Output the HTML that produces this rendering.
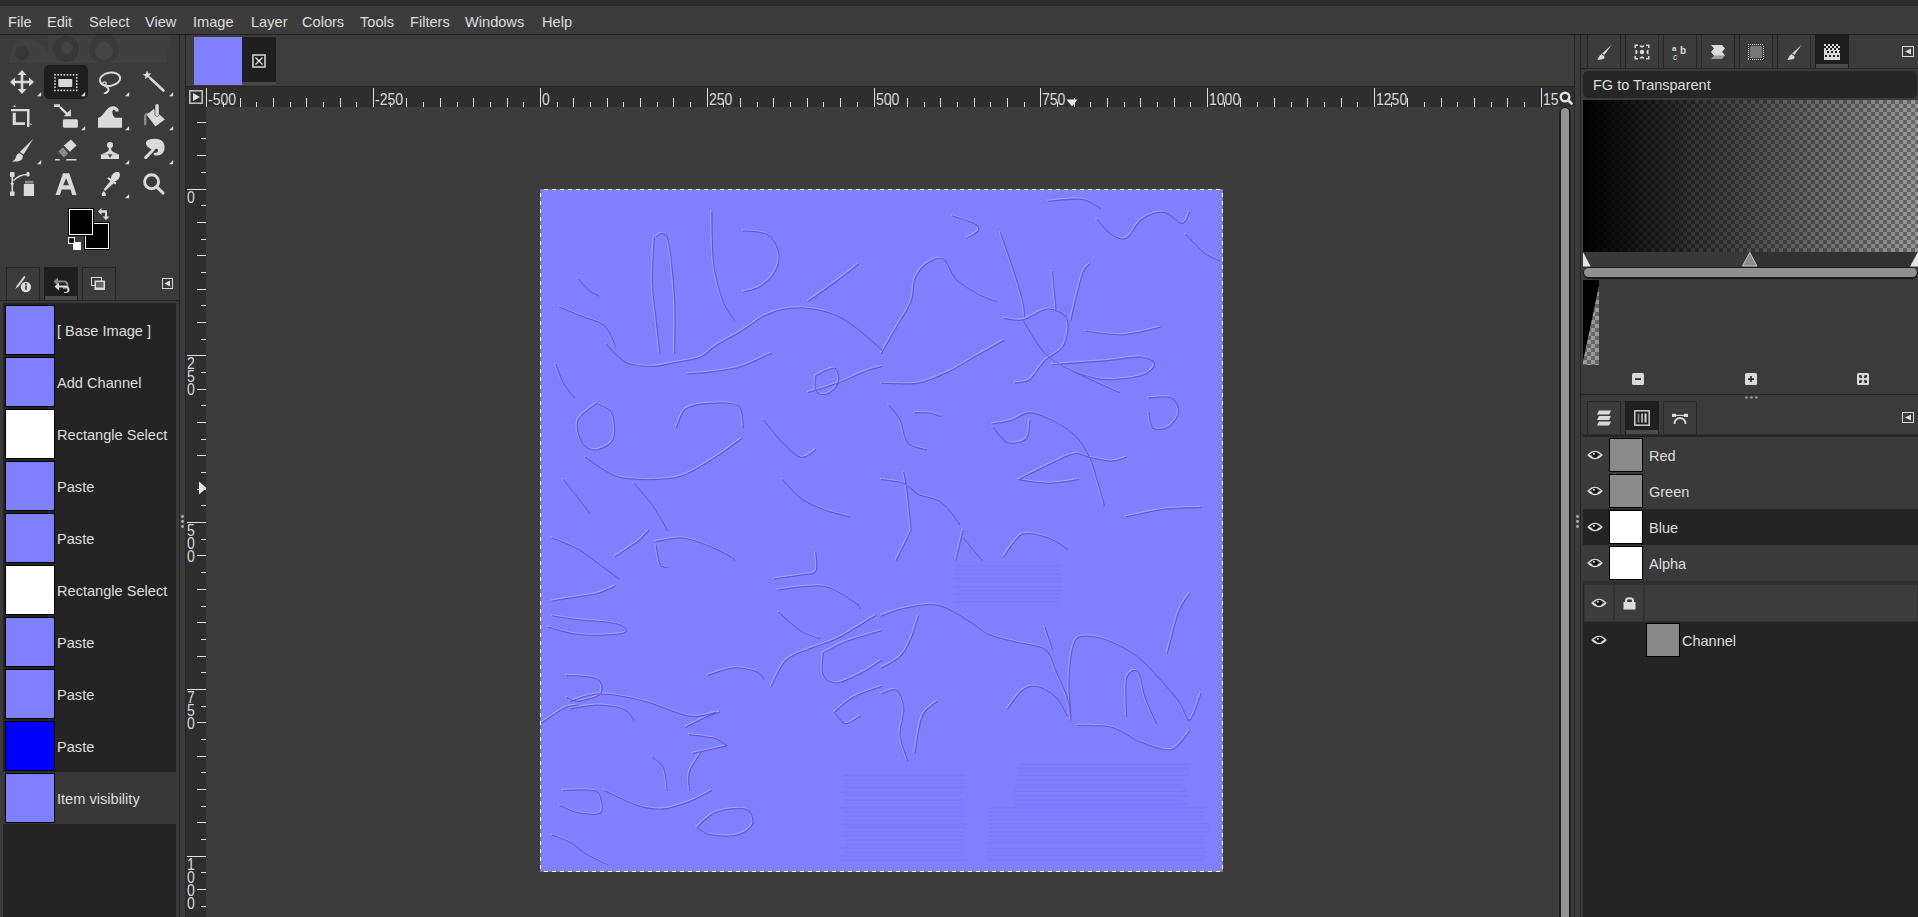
<!DOCTYPE html><html><head><meta charset="utf-8"><style>
*{margin:0;padding:0;box-sizing:border-box}
html,body{width:1918px;height:917px;overflow:hidden;background:#3c3c3c;font-family:"Liberation Sans",sans-serif;color:#dcdcdc}
div,span,svg{position:absolute}
.t{white-space:nowrap;font-size:14.6px;line-height:17px;color:#dedede}
.rl{white-space:nowrap;font-size:14.6px;line-height:14px;color:#d8d8d8;transform:scale(0.96,1.1);transform-origin:0 0}
.th{border:1px solid #000;background:#8080ff}
</style></head><body>
<div style="left:0px;top:0px;width:1918px;height:6px;background:#2b2b2b;"></div>
<div style="left:0px;top:6px;width:1918px;height:28px;background:#3c3c3c;"></div>
<div style="left:0px;top:34px;width:1918px;height:1px;background:#1e1e1e;"></div>
<span class="t" style="left:8px;top:14px;">File</span>
<span class="t" style="left:47px;top:14px;">Edit</span>
<span class="t" style="left:89px;top:14px;">Select</span>
<span class="t" style="left:145px;top:14px;">View</span>
<span class="t" style="left:193px;top:14px;">Image</span>
<span class="t" style="left:251px;top:14px;">Layer</span>
<span class="t" style="left:302px;top:14px;">Colors</span>
<span class="t" style="left:360px;top:14px;">Tools</span>
<span class="t" style="left:410px;top:14px;">Filters</span>
<span class="t" style="left:465px;top:14px;">Windows</span>
<span class="t" style="left:542px;top:14px;">Help</span>
<div style="left:0px;top:35px;width:179px;height:882px;background:#3b3b3b;"></div>
<svg style="left:0px;top:35px" width="179" height="28" viewBox="0 0 179 28"><path d="M9 28 L10 20 Q14 4 26 4 Q38 4 48 16 L48 0 L170 0 L166 28 Z" fill="#404040"/><circle cx="22" cy="18" r="7" fill="#363636"/><circle cx="66" cy="14" r="13" fill="#383838"/><circle cx="67" cy="13" r="6" fill="#424242"/><circle cx="104" cy="14" r="15" fill="#3a3a3a"/><circle cx="104" cy="16" r="9" fill="#444"/></svg>
<div style="left:44px;top:65px;width:44px;height:34px;background:#1e1e1e;border-radius:5px"></div>
<svg style="left:10px;top:70px" width="24" height="24" viewBox="0 0 24 24"><path fill="#dadada" d="M12 0 L16.5 5 L13.3 5 L13.3 10.7 L19 10.7 L19 7.5 L24 12 L19 16.5 L19 13.3 L13.3 13.3 L13.3 19 L16.5 19 L12 24 L7.5 19 L10.7 19 L10.7 13.3 L5 13.3 L5 16.5 L0 12 L5 7.5 L5 10.7 L10.7 10.7 L10.7 5 L7.5 5 Z"/></svg>
<svg style="left:37px;top:92px" width="5" height="5" viewBox="0 0 5 5"><path fill="#dadada" d="M4.2 0 V4.2 H0 Z"/></svg>
<svg style="left:54px;top:70px" width="24" height="24" viewBox="0 0 24 24"><rect x="0.2" y="4" width="1.6" height="1.6" fill="#dadada"/><rect x="0.2" y="19.6" width="1.6" height="1.6" fill="#dadada"/><rect x="3.3" y="4" width="1.6" height="1.6" fill="#dadada"/><rect x="3.3" y="19.6" width="1.6" height="1.6" fill="#dadada"/><rect x="6.4" y="4" width="1.6" height="1.6" fill="#dadada"/><rect x="6.4" y="19.6" width="1.6" height="1.6" fill="#dadada"/><rect x="9.5" y="4" width="1.6" height="1.6" fill="#dadada"/><rect x="9.5" y="19.6" width="1.6" height="1.6" fill="#dadada"/><rect x="12.6" y="4" width="1.6" height="1.6" fill="#dadada"/><rect x="12.6" y="19.6" width="1.6" height="1.6" fill="#dadada"/><rect x="15.7" y="4" width="1.6" height="1.6" fill="#dadada"/><rect x="15.7" y="19.6" width="1.6" height="1.6" fill="#dadada"/><rect x="18.8" y="4" width="1.6" height="1.6" fill="#dadada"/><rect x="18.8" y="19.6" width="1.6" height="1.6" fill="#dadada"/><rect x="21.9" y="4" width="1.6" height="1.6" fill="#dadada"/><rect x="21.9" y="19.6" width="1.6" height="1.6" fill="#dadada"/><rect x="0.2" y="7.1" width="1.6" height="1.6" fill="#dadada"/><rect x="21.9" y="7.1" width="1.6" height="1.6" fill="#dadada"/><rect x="0.2" y="10.2" width="1.6" height="1.6" fill="#dadada"/><rect x="21.9" y="10.2" width="1.6" height="1.6" fill="#dadada"/><rect x="0.2" y="13.3" width="1.6" height="1.6" fill="#dadada"/><rect x="21.9" y="13.3" width="1.6" height="1.6" fill="#dadada"/><rect x="0.2" y="16.4" width="1.6" height="1.6" fill="#dadada"/><rect x="21.9" y="16.4" width="1.6" height="1.6" fill="#dadada"/><rect x="4.3" y="8.9" width="14" height="8" rx="0.8" fill="#dadada"/></svg>
<svg style="left:81px;top:92px" width="5" height="5" viewBox="0 0 5 5"><path fill="#dadada" d="M4.2 0 V4.2 H0 Z"/></svg>
<svg style="left:98px;top:70px" width="24" height="24" viewBox="0 0 24 24"><ellipse cx="12" cy="9.2" rx="10.2" ry="6.6" fill="none" stroke="#dadada" stroke-width="1.9" transform="rotate(-10 12 9.2)"/><circle cx="6.5" cy="13.6" r="1.7" fill="none" stroke="#dadada" stroke-width="1.3"/><path d="M6 15 C7 16 9 16.5 10 18 C11.3 20 10 22.5 6.8 23.4" fill="none" stroke="#dadada" stroke-width="2" stroke-linecap="round"/></svg>
<svg style="left:125px;top:92px" width="5" height="5" viewBox="0 0 5 5"><path fill="#dadada" d="M4.2 0 V4.2 H0 Z"/></svg>
<svg style="left:142px;top:70px" width="24" height="24" viewBox="0 0 24 24"><path fill="#dadada" d="M5 0.5 L6.3 3.4 L9.4 3.2 L7.3 5.6 L8.4 8.5 L5.5 7.3 L3.1 9.3 L3.4 6.2 L0.7 4.5 L3.8 3.8 Z"/><path d="M8.5 8.5 L21.5 20.5" stroke="#dadada" stroke-width="2.6" stroke-linecap="round"/></svg>
<svg style="left:169px;top:92px" width="5" height="5" viewBox="0 0 5 5"><path fill="#dadada" d="M4.2 0 V4.2 H0 Z"/></svg>
<svg style="left:10px;top:104px" width="24" height="24" viewBox="0 0 24 24"><path fill="#dadada" d="M1 5 H19.5 V23 H17 V7.2 H1 Z M2.7 8.7 H5.8 V18.2 H15 V21 H2.7 Z M3.6 1.6 H5.5 V3 H3.6 Z M20.5 19.5 h1.2 v1.5 h-1.2z"/></svg>
<svg style="left:54px;top:104px" width="24" height="24" viewBox="0 0 24 24"><rect x="0" y="0.3" width="6" height="2.8" rx="0.5" fill="#dadada"/><path d="M6 3 L13.5 10.5" stroke="#dadada" stroke-width="2.4"/><path fill="#dadada" d="M9.8 12.2 H16.9 V5.2 Z"/><rect x="8.9" y="15.2" width="15" height="8.5" rx="1.5" fill="#dadada"/></svg>
<svg style="left:81px;top:126px" width="5" height="5" viewBox="0 0 5 5"><path fill="#dadada" d="M4.2 0 V4.2 H0 Z"/></svg>
<svg style="left:98px;top:104px" width="24" height="24" viewBox="0 0 24 24"><path fill="#dadada" d="M0 23.7 V13.8 C5 13.8 8 2.2 15 2.2 C18.5 2.2 20.8 4.5 20.8 7.6 L17.6 7.6 C17.6 6.2 16.6 5.5 15.6 5.8 C13.6 6.4 14 11 17 13.8 L24 13.8 V23.7 Z"/></svg>
<svg style="left:125px;top:126px" width="5" height="5" viewBox="0 0 5 5"><path fill="#dadada" d="M4.2 0 V4.2 H0 Z"/></svg>
<svg style="left:142px;top:104px" width="24" height="24" viewBox="0 0 24 24"><path d="M3.2 20 V12.5 C3.2 11 4 10.2 5.5 9.8" fill="none" stroke="#8a8a8a" stroke-width="2.4" stroke-linecap="round"/><path fill="#dadada" d="M4.7 10.7 L11.7 4.9 L22.9 15.5 L13.4 22.5 Z"/><rect x="12.6" y="-0.3" width="4.8" height="13" rx="2.4" fill="#3b3b3b"/><rect x="13.3" y="0" width="3.5" height="12.2" rx="1.75" fill="#dadada"/></svg>
<svg style="left:169px;top:126px" width="5" height="5" viewBox="0 0 5 5"><path fill="#dadada" d="M4.2 0 V4.2 H0 Z"/></svg>
<svg style="left:10px;top:138px" width="24" height="24" viewBox="0 0 24 24"><path fill="#dadada" d="M23.3 0.8 L13.5 16.4 L9.8 14 Z"/><path fill="#dadada" d="M9.2 15 C7.2 15.8 6.1 17.8 5.6 19.8 C5.2 21.4 3.8 22.7 1.8 23.4 C5 23.7 9 23.7 11.1 22.1 C12.6 21 13.1 19 12.8 17.4 Z"/></svg>
<svg style="left:37px;top:160px" width="5" height="5" viewBox="0 0 5 5"><path fill="#dadada" d="M4.2 0 V4.2 H0 Z"/></svg>
<svg style="left:54px;top:138px" width="24" height="24" viewBox="0 0 24 24"><path fill="#dadada" d="M17 1.5 L22.6 7.5 L15.8 13.8 L9.8 7.6 Z"/><path fill="#8a8a8a" d="M9 9.3 L14.2 15.6 L9.8 19.4 L4.3 13.4 Z"/><rect x="1.1" y="20.9" width="4.8" height="1.7" rx="0.5" fill="#dadada"/><rect x="12.2" y="20.9" width="10.3" height="1.7" rx="0.5" fill="#dadada"/></svg>
<svg style="left:98px;top:138px" width="24" height="24" viewBox="0 0 24 24"><circle cx="12" cy="7.1" r="3.05" fill="#dadada"/><path fill="#dadada" d="M10.8 9 H13.2 V11 C13.2 13.6 16 14.6 21 16.3 H3 C8 14.6 10.8 13.6 10.8 11 Z"/><path fill="#dadada" d="M2.9 16.2 H9.9 L12.05 20 L14.2 16.2 H21 V21.1 H2.9 Z"/></svg>
<svg style="left:125px;top:160px" width="5" height="5" viewBox="0 0 5 5"><path fill="#dadada" d="M4.2 0 V4.2 H0 Z"/></svg>
<svg style="left:142px;top:138px" width="24" height="24" viewBox="0 0 24 24"><path fill="#dadada" d="M4 4 C6 0.5 13 0 17.5 1.5 C22 3 23.5 8 22 13 C20.5 17 15 18.5 12 17 L11.5 15 C14 15.5 16.5 14 16 12 C15.5 10 13 10.5 12 13 L5 20.5 C4 21.5 2.5 21 2.2 20 C2 19 2.5 18.5 3 18 L9.5 11.5 C6 9 3.5 8 4 4 Z"/></svg>
<svg style="left:169px;top:160px" width="5" height="5" viewBox="0 0 5 5"><path fill="#dadada" d="M4.2 0 V4.2 H0 Z"/></svg>
<svg style="left:10px;top:172px" width="24" height="24" viewBox="0 0 24 24"><rect x="0" y="0" width="4.5" height="5" rx="0.8" fill="#dadada"/><rect x="0" y="19.5" width="4.5" height="4.5" rx="0.8" fill="#dadada"/><rect x="1.5" y="4" width="1.6" height="16" fill="#dadada"/><path d="M2.2 9.5 L4 11.8 L2.2 14 L0.4 11.8 Z" fill="#dadada"/><path d="M3.5 8.5 C8 4 12 2.5 17.5 2.5" fill="none" stroke="#dadada" stroke-width="1.5"/><rect x="16.5" y="0" width="3" height="4.5" rx="1" fill="#dadada"/><rect x="15" y="8.8" width="8.4" height="2.8" fill="#8a8a8a"/><path fill="#dadada" d="M14 12 H24 C24.4 12 24.4 13 24.4 14 V24 H13.8 V14 C13.8 13 13.8 12 14 12Z"/></svg>
<svg style="left:54px;top:172px" width="24" height="24" viewBox="0 0 24 24"><path fill="#dadada" fill-rule="evenodd" d="M9 1.3 H15.2 L22.6 23 H18.2 L16.6 17.6 H7.6 L6 23 H1.6 Z M9.1 13.2 H15 L12.05 6.2 Z"/></svg>
<svg style="left:98px;top:172px" width="24" height="24" viewBox="0 0 24 24"><ellipse cx="17.5" cy="4.6" rx="5.5" ry="3.7" transform="rotate(-52 17.5 4.6)" fill="#dadada"/><path d="M10.6 6.4 L17.2 11.1" stroke="#dadada" stroke-width="2.2" stroke-linecap="round"/><path d="M13.6 7.6 L16.6 10.5 L7 18.9 L5.6 17.6 Z" fill="#dadada"/><path d="M5.8 19.3 C4.6 20.5 3.7 21.4 3.7 22.3 A2.1 2.1 0 0 0 7.9 22.3 C7.9 21.4 7 20.5 5.8 19.3Z" fill="#dadada"/></svg>
<svg style="left:125px;top:194px" width="5" height="5" viewBox="0 0 5 5"><path fill="#dadada" d="M4.2 0 V4.2 H0 Z"/></svg>
<svg style="left:142px;top:172px" width="24" height="24" viewBox="0 0 24 24"><circle cx="9.6" cy="9.7" r="7" fill="none" stroke="#dadada" stroke-width="2.9"/><path d="M15.2 15.3 L21 21" stroke="#dadada" stroke-width="3.1" stroke-linecap="round"/></svg>
<div style="left:84px;top:222px;width:26px;height:28px;background:#000;"></div>
<div style="left:85px;top:223px;width:24px;height:26px;background:#fff;"></div>
<div style="left:86px;top:224px;width:22px;height:24px;background:#000;"></div>
<div style="left:68px;top:208px;width:26px;height:28px;background:#000;"></div>
<div style="left:69px;top:209px;width:24px;height:26px;background:#fff;"></div>
<div style="left:70px;top:210px;width:22px;height:24px;background:#000;"></div>
<svg style="left:98px;top:208px" width="12" height="12" viewBox="0 0 12 12"><path fill="#dadada" d="M0 3.5 L3.5 0 V2.3 H9 V8.5 H11.5 L8 12 L4.5 8.5 H7 V4.7 H3.5 V7 Z"/></svg>
<svg style="left:68px;top:237px" width="13" height="13" viewBox="0 0 13 13"><rect x="5" y="5" width="8" height="8" fill="#fff"/><rect x="0" y="0" width="7" height="7" fill="#eee"/><rect x="1.2" y="1.2" width="4.6" height="4.6" fill="#000"/></svg>
<div style="left:6px;top:267px;width:34px;height:33px;background:#3c3c3c;border:1px solid #282828;border-bottom:none"></div>
<div style="left:44px;top:267px;width:34px;height:33px;background:#1f1f1f;"></div>
<div style="left:45px;top:296px;width:32px;height:4px;background:#4a4a4a;"></div>
<div style="left:82px;top:267px;width:34px;height:33px;background:#3c3c3c;border:1px solid #282828;border-bottom:none"></div>
<svg style="left:14px;top:275px" width="18" height="18" viewBox="0 0 18 18"><path d="M10.2 0.8 L11.6 1.9 L4.3 11.7 L1.3 13.9 L2.9 10.6 Z" fill="#dadada"/><circle cx="11.9" cy="12" r="5.2" fill="#dadada"/><rect x="11.1" y="10.6" width="1.7" height="4.2" fill="#3c3c3c"/><circle cx="11.95" cy="8.9" r="1" fill="#3c3c3c"/></svg>
<svg style="left:52px;top:275px" width="18" height="18" viewBox="0 0 18 18"><path d="M12 5.5 H6 V2.5 L1.5 6.5 L6 10.5 V7.5 H12 C13.5 7.5 14.5 8.5 14.5 10 C14.5 11.5 13.5 12 12 12 H11 V14 H12 C15 14 16.5 12.5 16.5 10 C16.5 7 14.5 5.5 12 5.5Z" fill="#888"/><path d="M5 10.5 H11 V7.5 L15.5 11.5 L11 15.5 V12.5 H5 C3.5 12.5 2.5 13.5 2.5 15 C2.5 16.5 3.5 17 5 17 H6 V18 H5 C2 18 0.5 17 0.5 15 C0.5 12 2.5 10.5 5 10.5Z" fill="#dadada" transform="translate(18,0) scale(-1,1)"/></svg>
<svg style="left:91px;top:277px" width="16" height="16" viewBox="0 0 16 16"><rect x="0.5" y="0.5" width="10" height="8" fill="none" stroke="#dadada" stroke-width="1"/><rect x="3.5" y="3.5" width="10.5" height="9.5" fill="#dadada"/><rect x="5" y="5" width="7.5" height="5.5" fill="#666"/></svg>
<svg style="left:162px;top:278px" width="11" height="11" viewBox="0 0 11 11"><rect x="0.5" y="0.5" width="10" height="10" fill="none" stroke="#dadada" stroke-width="1"/><path d="M8 2.5 V8.5 L2.5 5.5 Z" fill="#dadada"/></svg>
<div style="left:0px;top:300px;width:179px;height:1px;background:#262626;"></div>
<div style="left:0px;top:301px;width:179px;height:2px;background:#393939;"></div>
<div style="left:3px;top:303px;width:173px;height:614px;background:#242424;"></div>
<div style="left:5px;top:305px;width:50px;height:50px;background:#8080ff;border:1px solid #000"></div>
<span class="t" style="left:57px;top:323px;">[ Base Image ]</span>
<div style="left:5px;top:357px;width:50px;height:50px;background:#8080ff;border:1px solid #000"></div>
<span class="t" style="left:57px;top:375px;">Add Channel</span>
<div style="left:5px;top:409px;width:50px;height:50px;background:#fff;border:1px solid #000"></div>
<span class="t" style="left:57px;top:427px;">Rectangle Select</span>
<div style="left:5px;top:461px;width:50px;height:50px;background:#8080ff;border:1px solid #000"></div>
<span class="t" style="left:57px;top:479px;">Paste</span>
<div style="left:5px;top:513px;width:50px;height:50px;background:#8080ff;border:1px solid #000"></div>
<span class="t" style="left:57px;top:531px;">Paste</span>
<div style="left:5px;top:565px;width:50px;height:50px;background:#fff;border:1px solid #000"></div>
<span class="t" style="left:57px;top:583px;">Rectangle Select</span>
<div style="left:5px;top:617px;width:50px;height:50px;background:#8080ff;border:1px solid #000"></div>
<span class="t" style="left:57px;top:635px;">Paste</span>
<div style="left:5px;top:669px;width:50px;height:50px;background:#8080ff;border:1px solid #000"></div>
<span class="t" style="left:57px;top:687px;">Paste</span>
<div style="left:5px;top:721px;width:50px;height:50px;background:#0000ff;border:1px solid #000"></div>
<span class="t" style="left:57px;top:739px;">Paste</span>
<div style="left:3px;top:772px;width:173px;height:52px;background:#383838;"></div>
<div style="left:5px;top:773px;width:50px;height:50px;background:#8080ff;border:1px solid #000"></div>
<span class="t" style="left:57px;top:791px;">Item visibility</span>
<div style="left:179px;top:35px;width:7px;height:882px;background:#3b3b3b;"></div>
<div style="left:179px;top:35px;width:1px;height:882px;background:#262626;"></div>
<div style="left:185px;top:35px;width:1px;height:882px;background:#262626;"></div>
<div style="left:186px;top:35px;width:1388px;height:51px;background:#3d3d3d;"></div>
<div style="left:186px;top:86px;width:1388px;height:1px;background:#262626;"></div>
<div style="left:194px;top:37px;width:82px;height:48px;background:#1f1f1f;"></div>
<div style="left:194px;top:37px;width:48px;height:48px;background:#8080ff;"></div>
<div style="left:242px;top:82px;width:34px;height:3px;background:#4a4a4a;"></div>
<svg style="left:252px;top:54px" width="14" height="14" viewBox="0 0 14 14"><rect x="1" y="1" width="12" height="12" fill="none" stroke="#cfcfcf" stroke-width="1.6"/><path d="M3.5 3.5 L10.5 10.5 M10.5 3.5 L3.5 10.5" stroke="#e8e8e8" stroke-width="1.3"/></svg>
<div style="left:186px;top:87px;width:1388px;height:20px;background:#2e2e2e;"></div>
<div style="left:186px;top:107px;width:20px;height:810px;background:#2e2e2e;"></div>
<svg style="left:189px;top:90px" width="14" height="14" viewBox="0 0 14 14"><rect x="0.8" y="0.8" width="12.4" height="12.4" fill="none" stroke="#bdbdbd" stroke-width="1.6"/><path d="M4 3 V11 L11 7 Z" fill="#e0e0e0"/></svg>
<div style="left:206px;top:88px;width:1px;height:19px;background:#e0e0e0;"></div>
<span class="rl" style="left:208px;top:92px;">-500</span>
<div style="left:223px;top:102px;width:1px;height:5px;background:#e0e0e0;"></div>
<div style="left:240px;top:98px;width:1px;height:9px;background:#e0e0e0;"></div>
<div style="left:256px;top:102px;width:1px;height:5px;background:#e0e0e0;"></div>
<div style="left:273px;top:98px;width:1px;height:9px;background:#e0e0e0;"></div>
<div style="left:290px;top:102px;width:1px;height:5px;background:#e0e0e0;"></div>
<div style="left:306px;top:98px;width:1px;height:9px;background:#e0e0e0;"></div>
<div style="left:323px;top:102px;width:1px;height:5px;background:#e0e0e0;"></div>
<div style="left:340px;top:98px;width:1px;height:9px;background:#e0e0e0;"></div>
<div style="left:356px;top:102px;width:1px;height:5px;background:#e0e0e0;"></div>
<div style="left:373px;top:88px;width:1px;height:19px;background:#e0e0e0;"></div>
<span class="rl" style="left:375px;top:92px;">-250</span>
<div style="left:390px;top:102px;width:1px;height:5px;background:#e0e0e0;"></div>
<div style="left:406px;top:98px;width:1px;height:9px;background:#e0e0e0;"></div>
<div style="left:423px;top:102px;width:1px;height:5px;background:#e0e0e0;"></div>
<div style="left:440px;top:98px;width:1px;height:9px;background:#e0e0e0;"></div>
<div style="left:457px;top:102px;width:1px;height:5px;background:#e0e0e0;"></div>
<div style="left:473px;top:98px;width:1px;height:9px;background:#e0e0e0;"></div>
<div style="left:490px;top:102px;width:1px;height:5px;background:#e0e0e0;"></div>
<div style="left:507px;top:98px;width:1px;height:9px;background:#e0e0e0;"></div>
<div style="left:523px;top:102px;width:1px;height:5px;background:#e0e0e0;"></div>
<div style="left:540px;top:88px;width:1px;height:19px;background:#e0e0e0;"></div>
<span class="rl" style="left:542px;top:92px;">0</span>
<div style="left:557px;top:102px;width:1px;height:5px;background:#e0e0e0;"></div>
<div style="left:573px;top:98px;width:1px;height:9px;background:#e0e0e0;"></div>
<div style="left:590px;top:102px;width:1px;height:5px;background:#e0e0e0;"></div>
<div style="left:607px;top:98px;width:1px;height:9px;background:#e0e0e0;"></div>
<div style="left:623px;top:102px;width:1px;height:5px;background:#e0e0e0;"></div>
<div style="left:640px;top:98px;width:1px;height:9px;background:#e0e0e0;"></div>
<div style="left:657px;top:102px;width:1px;height:5px;background:#e0e0e0;"></div>
<div style="left:673px;top:98px;width:1px;height:9px;background:#e0e0e0;"></div>
<div style="left:690px;top:102px;width:1px;height:5px;background:#e0e0e0;"></div>
<div style="left:707px;top:88px;width:1px;height:19px;background:#e0e0e0;"></div>
<span class="rl" style="left:709px;top:92px;">250</span>
<div style="left:723px;top:102px;width:1px;height:5px;background:#e0e0e0;"></div>
<div style="left:740px;top:98px;width:1px;height:9px;background:#e0e0e0;"></div>
<div style="left:757px;top:102px;width:1px;height:5px;background:#e0e0e0;"></div>
<div style="left:773px;top:98px;width:1px;height:9px;background:#e0e0e0;"></div>
<div style="left:790px;top:102px;width:1px;height:5px;background:#e0e0e0;"></div>
<div style="left:807px;top:98px;width:1px;height:9px;background:#e0e0e0;"></div>
<div style="left:823px;top:102px;width:1px;height:5px;background:#e0e0e0;"></div>
<div style="left:840px;top:98px;width:1px;height:9px;background:#e0e0e0;"></div>
<div style="left:857px;top:102px;width:1px;height:5px;background:#e0e0e0;"></div>
<div style="left:874px;top:88px;width:1px;height:19px;background:#e0e0e0;"></div>
<span class="rl" style="left:876px;top:92px;">500</span>
<div style="left:890px;top:102px;width:1px;height:5px;background:#e0e0e0;"></div>
<div style="left:907px;top:98px;width:1px;height:9px;background:#e0e0e0;"></div>
<div style="left:924px;top:102px;width:1px;height:5px;background:#e0e0e0;"></div>
<div style="left:940px;top:98px;width:1px;height:9px;background:#e0e0e0;"></div>
<div style="left:957px;top:102px;width:1px;height:5px;background:#e0e0e0;"></div>
<div style="left:974px;top:98px;width:1px;height:9px;background:#e0e0e0;"></div>
<div style="left:990px;top:102px;width:1px;height:5px;background:#e0e0e0;"></div>
<div style="left:1007px;top:98px;width:1px;height:9px;background:#e0e0e0;"></div>
<div style="left:1024px;top:102px;width:1px;height:5px;background:#e0e0e0;"></div>
<div style="left:1040px;top:88px;width:1px;height:19px;background:#e0e0e0;"></div>
<span class="rl" style="left:1042px;top:92px;">750</span>
<div style="left:1057px;top:102px;width:1px;height:5px;background:#e0e0e0;"></div>
<div style="left:1074px;top:98px;width:1px;height:9px;background:#e0e0e0;"></div>
<div style="left:1090px;top:102px;width:1px;height:5px;background:#e0e0e0;"></div>
<div style="left:1107px;top:98px;width:1px;height:9px;background:#e0e0e0;"></div>
<div style="left:1124px;top:102px;width:1px;height:5px;background:#e0e0e0;"></div>
<div style="left:1140px;top:98px;width:1px;height:9px;background:#e0e0e0;"></div>
<div style="left:1157px;top:102px;width:1px;height:5px;background:#e0e0e0;"></div>
<div style="left:1174px;top:98px;width:1px;height:9px;background:#e0e0e0;"></div>
<div style="left:1190px;top:102px;width:1px;height:5px;background:#e0e0e0;"></div>
<div style="left:1207px;top:88px;width:1px;height:19px;background:#e0e0e0;"></div>
<span class="rl" style="left:1209px;top:92px;">1000</span>
<div style="left:1224px;top:102px;width:1px;height:5px;background:#e0e0e0;"></div>
<div style="left:1240px;top:98px;width:1px;height:9px;background:#e0e0e0;"></div>
<div style="left:1257px;top:102px;width:1px;height:5px;background:#e0e0e0;"></div>
<div style="left:1274px;top:98px;width:1px;height:9px;background:#e0e0e0;"></div>
<div style="left:1291px;top:102px;width:1px;height:5px;background:#e0e0e0;"></div>
<div style="left:1307px;top:98px;width:1px;height:9px;background:#e0e0e0;"></div>
<div style="left:1324px;top:102px;width:1px;height:5px;background:#e0e0e0;"></div>
<div style="left:1341px;top:98px;width:1px;height:9px;background:#e0e0e0;"></div>
<div style="left:1357px;top:102px;width:1px;height:5px;background:#e0e0e0;"></div>
<div style="left:1374px;top:88px;width:1px;height:19px;background:#e0e0e0;"></div>
<span class="rl" style="left:1376px;top:92px;">1250</span>
<div style="left:1391px;top:102px;width:1px;height:5px;background:#e0e0e0;"></div>
<div style="left:1407px;top:98px;width:1px;height:9px;background:#e0e0e0;"></div>
<div style="left:1424px;top:102px;width:1px;height:5px;background:#e0e0e0;"></div>
<div style="left:1441px;top:98px;width:1px;height:9px;background:#e0e0e0;"></div>
<div style="left:1457px;top:102px;width:1px;height:5px;background:#e0e0e0;"></div>
<div style="left:1474px;top:98px;width:1px;height:9px;background:#e0e0e0;"></div>
<div style="left:1491px;top:102px;width:1px;height:5px;background:#e0e0e0;"></div>
<div style="left:1507px;top:98px;width:1px;height:9px;background:#e0e0e0;"></div>
<div style="left:1524px;top:102px;width:1px;height:5px;background:#e0e0e0;"></div>
<div style="left:1541px;top:88px;width:1px;height:19px;background:#e0e0e0;"></div>
<span class="rl" style="left:1543px;top:92px;">15</span>
<div style="left:197px;top:122px;width:9px;height:1px;background:#e0e0e0;"></div>
<div style="left:201px;top:138px;width:5px;height:1px;background:#e0e0e0;"></div>
<div style="left:197px;top:155px;width:9px;height:1px;background:#e0e0e0;"></div>
<div style="left:201px;top:172px;width:5px;height:1px;background:#e0e0e0;"></div>
<div style="left:187px;top:189px;width:19px;height:1px;background:#e0e0e0;"></div>
<span class="rl" style="left:187px;top:189.5px;">0</span>
<div style="left:201px;top:205px;width:5px;height:1px;background:#e0e0e0;"></div>
<div style="left:197px;top:222px;width:9px;height:1px;background:#e0e0e0;"></div>
<div style="left:201px;top:239px;width:5px;height:1px;background:#e0e0e0;"></div>
<div style="left:197px;top:255px;width:9px;height:1px;background:#e0e0e0;"></div>
<div style="left:201px;top:272px;width:5px;height:1px;background:#e0e0e0;"></div>
<div style="left:197px;top:289px;width:9px;height:1px;background:#e0e0e0;"></div>
<div style="left:201px;top:305px;width:5px;height:1px;background:#e0e0e0;"></div>
<div style="left:197px;top:322px;width:9px;height:1px;background:#e0e0e0;"></div>
<div style="left:201px;top:339px;width:5px;height:1px;background:#e0e0e0;"></div>
<div style="left:187px;top:355px;width:19px;height:1px;background:#e0e0e0;"></div>
<span class="rl" style="left:187px;top:355.5px;">2</span>
<span class="rl" style="left:187px;top:368.8px;">5</span>
<span class="rl" style="left:187px;top:382.1px;">0</span>
<div style="left:201px;top:372px;width:5px;height:1px;background:#e0e0e0;"></div>
<div style="left:197px;top:389px;width:9px;height:1px;background:#e0e0e0;"></div>
<div style="left:201px;top:405px;width:5px;height:1px;background:#e0e0e0;"></div>
<div style="left:197px;top:422px;width:9px;height:1px;background:#e0e0e0;"></div>
<div style="left:201px;top:439px;width:5px;height:1px;background:#e0e0e0;"></div>
<div style="left:197px;top:455px;width:9px;height:1px;background:#e0e0e0;"></div>
<div style="left:201px;top:472px;width:5px;height:1px;background:#e0e0e0;"></div>
<div style="left:197px;top:489px;width:9px;height:1px;background:#e0e0e0;"></div>
<div style="left:201px;top:505px;width:5px;height:1px;background:#e0e0e0;"></div>
<div style="left:187px;top:522px;width:19px;height:1px;background:#e0e0e0;"></div>
<span class="rl" style="left:187px;top:522.5px;">5</span>
<span class="rl" style="left:187px;top:535.8px;">0</span>
<span class="rl" style="left:187px;top:549.1px;">0</span>
<div style="left:201px;top:539px;width:5px;height:1px;background:#e0e0e0;"></div>
<div style="left:197px;top:555px;width:9px;height:1px;background:#e0e0e0;"></div>
<div style="left:201px;top:572px;width:5px;height:1px;background:#e0e0e0;"></div>
<div style="left:197px;top:589px;width:9px;height:1px;background:#e0e0e0;"></div>
<div style="left:201px;top:606px;width:5px;height:1px;background:#e0e0e0;"></div>
<div style="left:197px;top:622px;width:9px;height:1px;background:#e0e0e0;"></div>
<div style="left:201px;top:639px;width:5px;height:1px;background:#e0e0e0;"></div>
<div style="left:197px;top:656px;width:9px;height:1px;background:#e0e0e0;"></div>
<div style="left:201px;top:672px;width:5px;height:1px;background:#e0e0e0;"></div>
<div style="left:187px;top:689px;width:19px;height:1px;background:#e0e0e0;"></div>
<span class="rl" style="left:187px;top:689.5px;">7</span>
<span class="rl" style="left:187px;top:702.8px;">5</span>
<span class="rl" style="left:187px;top:716.1px;">0</span>
<div style="left:201px;top:706px;width:5px;height:1px;background:#e0e0e0;"></div>
<div style="left:197px;top:722px;width:9px;height:1px;background:#e0e0e0;"></div>
<div style="left:201px;top:739px;width:5px;height:1px;background:#e0e0e0;"></div>
<div style="left:197px;top:756px;width:9px;height:1px;background:#e0e0e0;"></div>
<div style="left:201px;top:772px;width:5px;height:1px;background:#e0e0e0;"></div>
<div style="left:197px;top:789px;width:9px;height:1px;background:#e0e0e0;"></div>
<div style="left:201px;top:806px;width:5px;height:1px;background:#e0e0e0;"></div>
<div style="left:197px;top:822px;width:9px;height:1px;background:#e0e0e0;"></div>
<div style="left:201px;top:839px;width:5px;height:1px;background:#e0e0e0;"></div>
<div style="left:187px;top:856px;width:19px;height:1px;background:#e0e0e0;"></div>
<span class="rl" style="left:187px;top:856.5px;">1</span>
<span class="rl" style="left:187px;top:869.8px;">0</span>
<span class="rl" style="left:187px;top:883.1px;">0</span>
<span class="rl" style="left:187px;top:896.4px;">0</span>
<div style="left:201px;top:872px;width:5px;height:1px;background:#e0e0e0;"></div>
<div style="left:197px;top:889px;width:9px;height:1px;background:#e0e0e0;"></div>
<div style="left:201px;top:906px;width:5px;height:1px;background:#e0e0e0;"></div>
<svg style="left:1559px;top:91px" width="14" height="14" viewBox="0 0 14 14"><circle cx="6" cy="6" r="4.3" fill="none" stroke="#e0e0e0" stroke-width="2.4"/><path d="M9 9 L12.5 12.5" stroke="#e0e0e0" stroke-width="2.6" stroke-linecap="round"/></svg>
<div style="left:1559px;top:107px;width:12px;height:810px;background:#1e1e1e;border-radius:6px 6px 0 0"></div>
<div style="left:1561px;top:108px;width:8px;height:809px;background:#939393;border-radius:4px 4px 0 0"></div>
<div style="left:540px;top:189px;width:683px;height:683px;background:#8080ff;"></div>
<svg style="left:541px;top:190px" width="681" height="681" viewBox="0 0 682 682"><g fill="none" stroke-linejoin="round" stroke-linecap="round"><path d="M65.1 154.3 C68.5 157.4 77.8 169.2 85.5 172.9 C93.3 176.6 103.5 176.6 111.6 176.6 C119.6 176.6 125.8 174.5 133.9 172.9 C141.9 171.4 153.1 170.1 159.9 167.3 C166.7 164.6 168.0 160.5 174.8 156.2 C181.6 151.8 192.7 146.3 200.8 141.3 C208.9 136.4 215.7 130.2 223.1 126.4 C230.6 122.7 237.4 120.2 245.4 119.0 C253.5 117.8 262.8 117.8 271.5 119.0 C280.1 120.2 289.4 122.7 297.5 126.4 C305.5 130.2 312.6 135.7 319.8 141.3 C327.1 146.9 337.5 156.8 341.0 159.9 M146.9 184.1 C150.9 183.8 162.1 183.5 171.1 182.2 C180.0 181.0 190.9 179.7 200.8 176.6 C210.7 173.5 225.6 165.8 230.6 163.6 M115.3 46.5 C116.5 46.0 120.5 42.3 122.7 43.9 C124.9 45.4 126.4 44.5 128.3 55.8 C130.2 67.1 132.9 93.6 133.9 111.6 C134.8 129.5 133.9 154.9 133.9 163.6 M113.4 48.3 C113.1 55.8 111.2 79.3 111.6 93.0 C111.9 106.6 114.0 118.4 115.3 130.2 C116.5 141.9 118.4 158.0 119.0 163.6 M171.1 22.3 C171.4 31.0 171.1 59.5 172.9 74.4 C174.8 89.2 178.8 102.3 182.2 111.6 C185.6 120.9 191.5 127.1 193.4 130.2 M202.7 40.9 C206.7 41.5 220.9 40.9 226.8 44.6 C232.7 48.3 236.8 57.0 238.0 63.2 C239.2 69.4 237.4 76.2 234.3 81.8 C231.2 87.4 224.7 93.3 219.4 96.7 C214.1 100.1 205.5 101.3 202.7 102.3 M267.7 111.6 C272.1 108.5 285.4 99.2 293.8 93.0 C302.1 86.8 313.9 77.5 317.9 74.4 M18.6 117.1 C22.3 118.7 33.5 123.3 40.9 126.4 C48.3 129.5 57.6 130.8 63.2 135.7 C68.8 140.7 72.5 152.8 74.4 156.2 M37.2 89.2 C39.0 91.1 44.9 97.6 48.3 100.4 C51.8 103.2 56.1 105.1 57.6 106.0 M55.8 213.8 C58.3 215.4 67.9 217.2 70.7 223.1 C73.4 229.0 75.0 243.0 72.5 249.1 C70.0 255.3 61.0 259.7 55.8 260.3 C50.5 260.9 44.0 257.8 40.9 252.9 C37.8 247.9 34.7 237.1 37.2 230.6 C39.7 224.0 52.7 216.6 55.8 213.8 M135.7 238.0 C137.3 234.9 139.8 223.4 145.0 219.4 C150.3 215.4 158.7 214.4 167.3 213.8 C176.0 213.2 191.2 211.7 197.1 215.7 C203.0 219.7 201.7 234.3 202.7 238.0 M44.6 267.7 C49.6 270.8 63.8 282.6 74.4 286.3 C84.9 290.1 96.7 290.1 107.8 290.1 C119.0 290.1 130.2 290.1 141.3 286.3 C152.5 282.6 164.9 273.9 174.8 267.7 C184.7 261.5 196.5 252.2 200.8 249.1 M275.2 185.9 C278.3 184.7 290.1 177.3 293.8 178.5 C297.5 179.7 298.7 189.0 297.5 193.4 C296.3 197.7 290.1 203.3 286.3 204.5 C282.6 205.8 277.0 203.9 275.2 200.8 C273.3 197.7 275.2 188.4 275.2 185.9 M267.7 202.7 C272.7 201.1 288.2 196.8 297.5 193.4 C306.8 190.0 316.3 185.0 323.5 182.2 C330.8 179.4 338.1 177.6 341.0 176.6 M223.1 230.6 C226.2 234.3 235.5 246.7 241.7 252.9 C247.9 259.1 254.7 266.5 260.3 267.7 C265.9 269.0 272.7 261.5 275.2 260.3 M241.7 290.1 C244.8 293.2 253.5 303.7 260.3 308.6 C267.1 313.6 274.6 316.7 282.6 319.8 C290.7 322.9 304.3 326.0 308.6 327.2 M22.3 290.1 C24.8 293.2 32.8 303.1 37.2 308.6 C41.5 314.2 46.5 321.0 48.3 323.5 M93.0 293.8 C96.1 297.5 106.0 308.2 111.6 316.1 C117.1 324.0 124.0 336.8 126.4 341.0 M14.9 174.8 C16.1 177.9 19.2 187.8 22.3 193.4 C25.4 198.9 31.6 205.8 33.5 208.2 M341.0 163.6 C343.5 159.3 350.9 146.3 355.9 137.6 C360.8 128.9 367.7 119.6 370.7 111.6 C373.8 103.5 372.0 95.4 374.5 89.2 C376.9 83.0 381.0 77.8 385.6 74.4 C390.3 71.0 397.4 66.3 402.4 68.8 C407.3 71.3 409.5 83.4 415.4 89.2 C421.3 95.1 430.9 100.4 437.7 104.1 C444.5 107.8 453.2 110.3 456.3 111.6 M341.0 193.4 C347.2 193.4 367.0 195.2 378.2 193.4 C389.3 191.5 398.6 186.6 407.9 182.2 C417.2 177.9 424.7 172.6 434.0 167.3 C443.3 162.1 458.8 153.4 463.7 150.6 M460.0 42.8 C461.9 48.0 467.4 62.9 471.2 74.4 C474.9 85.8 480.1 102.9 482.3 111.6 C484.5 120.2 483.9 124.0 484.2 126.4 M463.7 128.3 C466.8 128.6 474.9 131.7 482.3 130.2 C489.7 128.6 500.9 119.0 508.3 119.0 C515.8 119.0 524.5 124.0 526.9 130.2 C529.4 136.4 526.9 149.4 523.2 156.2 C519.5 163.0 510.2 165.5 504.6 171.1 C499.0 176.6 494.7 185.9 489.7 189.7 C484.8 193.4 477.4 192.7 474.9 193.4 M482.3 130.2 C486.0 135.7 495.9 154.9 504.6 163.6 C513.3 172.3 522.0 175.7 534.4 182.2 C546.8 188.7 571.6 199.3 579.0 202.7 M512.1 174.8 C520.7 174.2 549.2 172.3 564.1 171.1 C579.0 169.8 592.9 166.7 601.3 167.3 C609.7 168.0 614.3 171.7 614.3 174.8 C614.3 177.9 609.7 183.5 601.3 185.9 C592.9 188.4 575.3 190.3 564.1 189.7 C553.0 189.0 539.3 183.5 534.4 182.2 M545.5 141.3 C551.7 141.9 570.3 145.6 582.7 145.0 C595.1 144.4 613.7 138.8 619.9 137.6 M512.1 81.8 L515.8 119.0 M530.7 130.2 C532.5 122.7 538.7 94.8 541.8 85.5 C544.9 76.2 548.0 76.2 549.2 74.4 M411.7 26.0 C415.4 27.3 429.6 31.0 434.0 33.5 C438.3 35.9 438.9 38.4 437.7 40.9 C436.4 43.4 428.4 47.1 426.5 48.3 M508.3 11.2 C513.9 10.8 533.1 8.1 541.8 9.3 C550.5 10.5 557.3 17.0 560.4 18.6 M556.7 29.7 C559.2 32.2 566.6 41.5 571.6 44.6 C576.5 47.7 581.5 50.8 586.4 48.3 C591.4 45.9 595.1 34.1 601.3 29.7 C607.5 25.4 616.8 21.7 623.6 22.3 C630.4 22.9 637.9 33.5 642.2 33.5 C646.5 33.5 648.4 24.2 649.6 22.3 M645.9 44.6 C649.0 47.7 658.9 58.9 664.5 63.2 C670.1 67.6 676.9 69.4 679.4 70.7 M452.6 234.3 C455.7 233.7 465.0 232.4 471.2 230.6 C477.4 228.7 482.9 223.1 489.7 223.1 C496.6 223.1 504.6 226.8 512.1 230.6 C519.5 234.3 528.2 239.2 534.4 245.4 C540.6 251.6 545.5 260.3 549.2 267.7 C553.0 275.2 554.2 282.0 556.7 290.1 C559.2 298.1 562.9 311.7 564.1 316.1 M452.6 238.0 C455.0 240.5 461.9 251.0 467.4 252.9 C473.0 254.7 482.3 252.9 486.0 249.1 C489.7 245.4 489.1 233.7 489.7 230.6 M478.6 290.1 C483.5 287.6 499.0 279.5 508.3 275.2 C517.6 270.8 527.6 265.3 534.4 264.0 C541.2 262.8 543.0 266.5 549.2 267.7 C555.4 269.0 565.4 271.5 571.6 271.5 C577.8 271.5 584.0 268.4 586.4 267.7 M478.6 290.1 C483.5 290.7 498.4 293.8 508.3 293.8 C518.3 293.8 533.1 290.7 538.1 290.1 M586.4 327.2 C592.6 326.0 611.2 321.4 623.6 319.8 C636.0 318.3 654.6 318.3 660.8 317.9 M608.7 208.2 C612.5 208.2 626.1 205.8 631.1 208.2 C636.0 210.7 639.1 218.2 638.5 223.1 C637.9 228.1 631.7 235.5 627.3 238.0 C623.0 240.5 615.6 240.5 612.5 238.0 C609.4 235.5 609.4 225.6 608.7 223.1 M341.0 290.1 C344.7 290.7 357.1 291.3 363.3 293.8 C369.5 296.3 372.0 301.8 378.2 304.9 C384.4 308.0 393.7 307.4 400.5 312.4 C407.3 317.3 416.0 331.0 419.1 334.7 M348.4 215.7 C350.3 218.2 356.5 224.4 359.6 230.6 C362.7 236.8 362.7 247.9 367.0 252.9 C371.4 257.8 382.5 259.1 385.6 260.3 M374.5 223.1 C376.9 223.1 385.0 222.5 389.3 223.1 C393.7 223.7 398.6 226.2 400.5 226.8 M363.3 282.6 C363.9 286.3 365.8 295.2 367.0 304.9 C368.3 314.7 370.1 335.0 370.7 341.0 M11.2 348.4 C15.5 350.3 28.5 354.6 37.2 359.6 C45.9 364.6 56.4 373.2 63.2 378.2 C70.0 383.1 75.6 387.5 78.1 389.3 M115.3 352.2 C119.6 351.5 132.6 347.8 141.3 348.4 C150.0 349.1 159.3 352.8 167.3 355.9 C175.4 359.0 185.3 364.6 189.7 367.0 C194.0 369.5 192.7 370.1 193.4 370.7 M115.3 355.9 C115.9 359.0 117.1 370.7 119.0 374.5 C120.9 378.2 125.2 377.6 126.4 378.2 M74.4 367.0 C78.1 364.6 91.1 356.5 96.7 352.2 C102.3 347.8 106.0 342.9 107.8 341.0 M11.2 411.7 C14.9 411.0 26.0 409.2 33.5 407.9 C40.9 406.7 49.0 406.1 55.8 404.2 C62.6 402.4 71.3 398.0 74.4 396.8 M11.2 426.5 C15.5 427.1 26.7 429.0 37.2 430.2 C47.7 431.5 66.3 432.1 74.4 434.0 C82.4 435.8 85.5 439.5 85.5 441.4 C85.5 443.3 82.4 444.5 74.4 445.1 C66.3 445.7 48.3 446.4 37.2 445.1 C26.0 443.9 12.4 438.9 7.4 437.7 M234.3 389.3 C238.6 388.7 253.5 386.9 260.3 385.6 C267.1 384.4 272.7 385.6 275.2 381.9 C277.7 378.2 275.2 366.4 275.2 363.3 M238.0 400.5 C245.4 399.9 270.2 394.9 282.6 396.8 C295.0 398.6 306.2 407.9 312.4 411.7 C318.6 415.4 318.6 417.9 319.8 419.1 M238.0 422.8 C241.7 425.9 253.5 437.1 260.3 441.4 C267.1 445.7 275.8 447.6 278.9 448.8 M230.6 497.2 C233.0 492.8 239.2 477.4 245.4 471.2 C251.6 465.0 259.1 463.7 267.7 460.0 C276.4 456.3 286.3 454.4 297.5 448.8 C308.6 443.3 328.5 430.2 334.7 426.5 M282.6 463.7 C286.3 461.9 295.2 456.3 304.9 452.6 C314.7 448.8 335.0 443.3 341.0 441.4 M282.6 463.7 C282.6 467.4 280.1 481.1 282.6 486.0 C285.1 491.0 290.7 494.1 297.5 493.5 C304.3 492.8 316.3 486.0 323.5 482.3 C330.8 478.6 338.1 473.0 341.0 471.2 M293.8 523.2 C296.9 520.7 304.5 512.7 312.4 508.3 C320.2 504.0 336.2 499.0 341.0 497.2 M293.8 523.2 C295.6 525.1 300.6 533.7 304.9 534.4 C309.3 535.0 317.3 528.2 319.8 526.9 M26.0 486.0 C31.0 486.6 50.2 486.6 55.8 489.7 C61.4 492.8 62.6 500.9 59.5 504.6 C56.4 508.3 42.8 511.4 37.2 512.1 C31.6 512.7 27.9 509.0 26.0 508.3 M29.7 512.1 C34.7 510.8 47.1 504.6 59.5 504.6 C71.9 504.6 89.2 508.3 104.1 512.1 C119.0 515.8 137.0 525.1 148.7 526.9 C160.5 528.8 170.4 523.8 174.8 523.2 M0.0 534.4 C3.7 531.9 16.1 522.6 22.3 519.5 C28.5 516.4 34.7 516.4 37.2 515.8 M29.7 519.5 C34.1 518.9 47.1 515.8 55.8 515.8 C64.5 515.8 75.6 517.0 81.8 519.5 C88.0 522.0 91.1 528.8 93.0 530.7 M145.0 538.1 C148.7 536.2 161.8 529.4 167.3 526.9 C172.9 524.5 176.6 523.8 178.5 523.2 M148.7 545.5 C153.1 546.1 168.6 547.4 174.8 549.2 C181.0 551.1 184.1 555.4 185.9 556.7 M159.9 564.1 C158.0 567.2 150.6 576.5 148.7 582.7 C146.9 588.9 148.7 598.2 148.7 601.3 M152.5 564.1 L185.9 556.7 M22.3 601.3 C27.3 601.3 45.9 600.1 52.1 601.3 C58.3 602.5 58.3 605.0 59.5 608.7 C60.7 612.5 63.2 621.1 59.5 623.6 C55.8 626.1 44.0 624.9 37.2 623.6 C30.4 622.4 21.7 617.4 18.6 616.2 M63.2 601.3 C68.8 603.8 86.8 613.1 96.7 616.2 C106.6 619.3 114.0 620.5 122.7 619.9 C131.4 619.3 140.7 615.6 148.7 612.5 C156.8 609.4 167.3 603.2 171.1 601.3 M156.2 638.5 C159.3 636.0 166.7 626.7 174.8 623.6 C182.8 620.5 198.3 618.0 204.5 619.9 C210.7 621.8 213.2 630.4 212.0 634.8 C210.7 639.1 203.9 644.1 197.1 645.9 C190.3 647.8 177.9 647.2 171.1 645.9 C164.2 644.7 158.7 639.7 156.2 638.5 M11.2 645.9 C14.3 647.2 24.2 650.3 29.7 653.4 C35.3 656.5 38.4 660.8 44.6 664.5 C50.8 668.2 63.2 673.8 66.9 675.7 M167.3 486.0 C171.7 484.8 185.3 479.2 193.4 478.6 C201.4 478.0 210.7 480.4 215.7 482.3 C220.6 484.2 221.9 488.5 223.1 489.7 M111.6 567.8 C113.4 569.7 120.2 573.4 122.7 579.0 C125.2 584.6 125.8 597.6 126.4 601.3 M341.0 426.5 C344.7 425.3 354.0 421.0 363.3 419.1 C372.6 417.2 386.2 413.5 396.8 415.4 C407.3 417.2 417.9 425.3 426.5 430.2 C435.2 435.2 440.8 441.4 448.8 445.1 C456.9 448.8 465.6 450.1 474.9 452.6 C484.2 455.0 497.8 455.0 504.6 460.0 C511.4 465.0 512.1 474.3 515.8 482.3 C519.5 490.4 524.5 500.3 526.9 508.3 C529.4 516.4 530.0 526.9 530.7 530.7 M504.6 437.7 L512.1 460.0 M530.7 526.9 C530.3 520.7 528.2 502.1 528.8 489.7 C529.4 477.4 531.0 459.7 534.4 452.6 C537.8 445.4 543.0 447.0 549.2 447.0 C555.4 447.0 563.5 449.2 571.6 452.6 C579.6 456.0 590.1 461.9 597.6 467.4 C605.0 473.0 609.4 478.6 616.2 486.0 C623.0 493.5 632.9 504.6 638.5 512.1 C644.1 519.5 645.9 531.9 649.6 530.7 C653.4 529.4 658.9 509.0 660.8 504.6 M538.1 536.2 C543.7 536.5 561.0 535.3 571.6 538.1 C582.1 540.9 591.4 549.2 601.3 553.0 C611.2 556.7 623.0 562.3 631.1 560.4 C639.1 558.5 646.5 544.9 649.6 541.8 M467.4 519.5 C469.9 516.4 477.4 504.6 482.3 500.9 C487.3 497.2 491.6 495.9 497.2 497.2 C502.8 498.4 510.8 503.4 515.8 508.3 C520.7 513.3 525.1 523.8 526.9 526.9 M586.4 526.9 C586.4 520.7 584.6 497.2 586.4 489.7 C588.3 482.3 594.5 479.2 597.6 482.3 C600.7 485.4 601.9 499.7 605.0 508.3 C608.1 517.0 614.3 530.0 616.2 534.4 M627.3 463.7 C629.2 456.9 634.8 432.7 638.5 422.8 C642.2 412.9 647.8 407.3 649.6 404.2 M341.0 478.6 C344.1 476.7 354.6 472.4 359.6 467.4 C364.6 462.5 367.7 455.7 370.7 448.8 C373.8 442.0 376.9 430.2 378.2 426.5 M341.0 504.6 C343.5 504.0 352.2 498.4 355.9 500.9 C359.6 503.4 362.7 512.1 363.3 519.5 C363.9 526.9 359.0 536.8 359.6 545.5 C360.2 554.2 365.8 567.2 367.0 571.6 M374.5 564.1 C375.7 557.9 378.2 535.6 381.9 526.9 C385.6 518.3 394.3 514.5 396.8 512.1 M355.9 370.7 L370.7 341.0 M415.4 370.7 L422.8 341.0 M463.7 367.0 C466.8 363.3 474.9 347.8 482.3 344.7 C489.7 341.6 500.9 346.0 508.3 348.4 C515.8 350.9 523.8 357.7 526.9 359.6 M422.8 348.4 L441.4 370.7" stroke="#a0b4ff" stroke-width="1.3" opacity="0.8" transform="translate(-1,-1)"/><path d="M65.1 154.3 C68.5 157.4 77.8 169.2 85.5 172.9 C93.3 176.6 103.5 176.6 111.6 176.6 C119.6 176.6 125.8 174.5 133.9 172.9 C141.9 171.4 153.1 170.1 159.9 167.3 C166.7 164.6 168.0 160.5 174.8 156.2 C181.6 151.8 192.7 146.3 200.8 141.3 C208.9 136.4 215.7 130.2 223.1 126.4 C230.6 122.7 237.4 120.2 245.4 119.0 C253.5 117.8 262.8 117.8 271.5 119.0 C280.1 120.2 289.4 122.7 297.5 126.4 C305.5 130.2 312.6 135.7 319.8 141.3 C327.1 146.9 337.5 156.8 341.0 159.9 M146.9 184.1 C150.9 183.8 162.1 183.5 171.1 182.2 C180.0 181.0 190.9 179.7 200.8 176.6 C210.7 173.5 225.6 165.8 230.6 163.6 M115.3 46.5 C116.5 46.0 120.5 42.3 122.7 43.9 C124.9 45.4 126.4 44.5 128.3 55.8 C130.2 67.1 132.9 93.6 133.9 111.6 C134.8 129.5 133.9 154.9 133.9 163.6 M113.4 48.3 C113.1 55.8 111.2 79.3 111.6 93.0 C111.9 106.6 114.0 118.4 115.3 130.2 C116.5 141.9 118.4 158.0 119.0 163.6 M171.1 22.3 C171.4 31.0 171.1 59.5 172.9 74.4 C174.8 89.2 178.8 102.3 182.2 111.6 C185.6 120.9 191.5 127.1 193.4 130.2 M202.7 40.9 C206.7 41.5 220.9 40.9 226.8 44.6 C232.7 48.3 236.8 57.0 238.0 63.2 C239.2 69.4 237.4 76.2 234.3 81.8 C231.2 87.4 224.7 93.3 219.4 96.7 C214.1 100.1 205.5 101.3 202.7 102.3 M267.7 111.6 C272.1 108.5 285.4 99.2 293.8 93.0 C302.1 86.8 313.9 77.5 317.9 74.4 M18.6 117.1 C22.3 118.7 33.5 123.3 40.9 126.4 C48.3 129.5 57.6 130.8 63.2 135.7 C68.8 140.7 72.5 152.8 74.4 156.2 M37.2 89.2 C39.0 91.1 44.9 97.6 48.3 100.4 C51.8 103.2 56.1 105.1 57.6 106.0 M55.8 213.8 C58.3 215.4 67.9 217.2 70.7 223.1 C73.4 229.0 75.0 243.0 72.5 249.1 C70.0 255.3 61.0 259.7 55.8 260.3 C50.5 260.9 44.0 257.8 40.9 252.9 C37.8 247.9 34.7 237.1 37.2 230.6 C39.7 224.0 52.7 216.6 55.8 213.8 M135.7 238.0 C137.3 234.9 139.8 223.4 145.0 219.4 C150.3 215.4 158.7 214.4 167.3 213.8 C176.0 213.2 191.2 211.7 197.1 215.7 C203.0 219.7 201.7 234.3 202.7 238.0 M44.6 267.7 C49.6 270.8 63.8 282.6 74.4 286.3 C84.9 290.1 96.7 290.1 107.8 290.1 C119.0 290.1 130.2 290.1 141.3 286.3 C152.5 282.6 164.9 273.9 174.8 267.7 C184.7 261.5 196.5 252.2 200.8 249.1 M275.2 185.9 C278.3 184.7 290.1 177.3 293.8 178.5 C297.5 179.7 298.7 189.0 297.5 193.4 C296.3 197.7 290.1 203.3 286.3 204.5 C282.6 205.8 277.0 203.9 275.2 200.8 C273.3 197.7 275.2 188.4 275.2 185.9 M267.7 202.7 C272.7 201.1 288.2 196.8 297.5 193.4 C306.8 190.0 316.3 185.0 323.5 182.2 C330.8 179.4 338.1 177.6 341.0 176.6 M223.1 230.6 C226.2 234.3 235.5 246.7 241.7 252.9 C247.9 259.1 254.7 266.5 260.3 267.7 C265.9 269.0 272.7 261.5 275.2 260.3 M241.7 290.1 C244.8 293.2 253.5 303.7 260.3 308.6 C267.1 313.6 274.6 316.7 282.6 319.8 C290.7 322.9 304.3 326.0 308.6 327.2 M22.3 290.1 C24.8 293.2 32.8 303.1 37.2 308.6 C41.5 314.2 46.5 321.0 48.3 323.5 M93.0 293.8 C96.1 297.5 106.0 308.2 111.6 316.1 C117.1 324.0 124.0 336.8 126.4 341.0 M14.9 174.8 C16.1 177.9 19.2 187.8 22.3 193.4 C25.4 198.9 31.6 205.8 33.5 208.2 M341.0 163.6 C343.5 159.3 350.9 146.3 355.9 137.6 C360.8 128.9 367.7 119.6 370.7 111.6 C373.8 103.5 372.0 95.4 374.5 89.2 C376.9 83.0 381.0 77.8 385.6 74.4 C390.3 71.0 397.4 66.3 402.4 68.8 C407.3 71.3 409.5 83.4 415.4 89.2 C421.3 95.1 430.9 100.4 437.7 104.1 C444.5 107.8 453.2 110.3 456.3 111.6 M341.0 193.4 C347.2 193.4 367.0 195.2 378.2 193.4 C389.3 191.5 398.6 186.6 407.9 182.2 C417.2 177.9 424.7 172.6 434.0 167.3 C443.3 162.1 458.8 153.4 463.7 150.6 M460.0 42.8 C461.9 48.0 467.4 62.9 471.2 74.4 C474.9 85.8 480.1 102.9 482.3 111.6 C484.5 120.2 483.9 124.0 484.2 126.4 M463.7 128.3 C466.8 128.6 474.9 131.7 482.3 130.2 C489.7 128.6 500.9 119.0 508.3 119.0 C515.8 119.0 524.5 124.0 526.9 130.2 C529.4 136.4 526.9 149.4 523.2 156.2 C519.5 163.0 510.2 165.5 504.6 171.1 C499.0 176.6 494.7 185.9 489.7 189.7 C484.8 193.4 477.4 192.7 474.9 193.4 M482.3 130.2 C486.0 135.7 495.9 154.9 504.6 163.6 C513.3 172.3 522.0 175.7 534.4 182.2 C546.8 188.7 571.6 199.3 579.0 202.7 M512.1 174.8 C520.7 174.2 549.2 172.3 564.1 171.1 C579.0 169.8 592.9 166.7 601.3 167.3 C609.7 168.0 614.3 171.7 614.3 174.8 C614.3 177.9 609.7 183.5 601.3 185.9 C592.9 188.4 575.3 190.3 564.1 189.7 C553.0 189.0 539.3 183.5 534.4 182.2 M545.5 141.3 C551.7 141.9 570.3 145.6 582.7 145.0 C595.1 144.4 613.7 138.8 619.9 137.6 M512.1 81.8 L515.8 119.0 M530.7 130.2 C532.5 122.7 538.7 94.8 541.8 85.5 C544.9 76.2 548.0 76.2 549.2 74.4 M411.7 26.0 C415.4 27.3 429.6 31.0 434.0 33.5 C438.3 35.9 438.9 38.4 437.7 40.9 C436.4 43.4 428.4 47.1 426.5 48.3 M508.3 11.2 C513.9 10.8 533.1 8.1 541.8 9.3 C550.5 10.5 557.3 17.0 560.4 18.6 M556.7 29.7 C559.2 32.2 566.6 41.5 571.6 44.6 C576.5 47.7 581.5 50.8 586.4 48.3 C591.4 45.9 595.1 34.1 601.3 29.7 C607.5 25.4 616.8 21.7 623.6 22.3 C630.4 22.9 637.9 33.5 642.2 33.5 C646.5 33.5 648.4 24.2 649.6 22.3 M645.9 44.6 C649.0 47.7 658.9 58.9 664.5 63.2 C670.1 67.6 676.9 69.4 679.4 70.7 M452.6 234.3 C455.7 233.7 465.0 232.4 471.2 230.6 C477.4 228.7 482.9 223.1 489.7 223.1 C496.6 223.1 504.6 226.8 512.1 230.6 C519.5 234.3 528.2 239.2 534.4 245.4 C540.6 251.6 545.5 260.3 549.2 267.7 C553.0 275.2 554.2 282.0 556.7 290.1 C559.2 298.1 562.9 311.7 564.1 316.1 M452.6 238.0 C455.0 240.5 461.9 251.0 467.4 252.9 C473.0 254.7 482.3 252.9 486.0 249.1 C489.7 245.4 489.1 233.7 489.7 230.6 M478.6 290.1 C483.5 287.6 499.0 279.5 508.3 275.2 C517.6 270.8 527.6 265.3 534.4 264.0 C541.2 262.8 543.0 266.5 549.2 267.7 C555.4 269.0 565.4 271.5 571.6 271.5 C577.8 271.5 584.0 268.4 586.4 267.7 M478.6 290.1 C483.5 290.7 498.4 293.8 508.3 293.8 C518.3 293.8 533.1 290.7 538.1 290.1 M586.4 327.2 C592.6 326.0 611.2 321.4 623.6 319.8 C636.0 318.3 654.6 318.3 660.8 317.9 M608.7 208.2 C612.5 208.2 626.1 205.8 631.1 208.2 C636.0 210.7 639.1 218.2 638.5 223.1 C637.9 228.1 631.7 235.5 627.3 238.0 C623.0 240.5 615.6 240.5 612.5 238.0 C609.4 235.5 609.4 225.6 608.7 223.1 M341.0 290.1 C344.7 290.7 357.1 291.3 363.3 293.8 C369.5 296.3 372.0 301.8 378.2 304.9 C384.4 308.0 393.7 307.4 400.5 312.4 C407.3 317.3 416.0 331.0 419.1 334.7 M348.4 215.7 C350.3 218.2 356.5 224.4 359.6 230.6 C362.7 236.8 362.7 247.9 367.0 252.9 C371.4 257.8 382.5 259.1 385.6 260.3 M374.5 223.1 C376.9 223.1 385.0 222.5 389.3 223.1 C393.7 223.7 398.6 226.2 400.5 226.8 M363.3 282.6 C363.9 286.3 365.8 295.2 367.0 304.9 C368.3 314.7 370.1 335.0 370.7 341.0 M11.2 348.4 C15.5 350.3 28.5 354.6 37.2 359.6 C45.9 364.6 56.4 373.2 63.2 378.2 C70.0 383.1 75.6 387.5 78.1 389.3 M115.3 352.2 C119.6 351.5 132.6 347.8 141.3 348.4 C150.0 349.1 159.3 352.8 167.3 355.9 C175.4 359.0 185.3 364.6 189.7 367.0 C194.0 369.5 192.7 370.1 193.4 370.7 M115.3 355.9 C115.9 359.0 117.1 370.7 119.0 374.5 C120.9 378.2 125.2 377.6 126.4 378.2 M74.4 367.0 C78.1 364.6 91.1 356.5 96.7 352.2 C102.3 347.8 106.0 342.9 107.8 341.0 M11.2 411.7 C14.9 411.0 26.0 409.2 33.5 407.9 C40.9 406.7 49.0 406.1 55.8 404.2 C62.6 402.4 71.3 398.0 74.4 396.8 M11.2 426.5 C15.5 427.1 26.7 429.0 37.2 430.2 C47.7 431.5 66.3 432.1 74.4 434.0 C82.4 435.8 85.5 439.5 85.5 441.4 C85.5 443.3 82.4 444.5 74.4 445.1 C66.3 445.7 48.3 446.4 37.2 445.1 C26.0 443.9 12.4 438.9 7.4 437.7 M234.3 389.3 C238.6 388.7 253.5 386.9 260.3 385.6 C267.1 384.4 272.7 385.6 275.2 381.9 C277.7 378.2 275.2 366.4 275.2 363.3 M238.0 400.5 C245.4 399.9 270.2 394.9 282.6 396.8 C295.0 398.6 306.2 407.9 312.4 411.7 C318.6 415.4 318.6 417.9 319.8 419.1 M238.0 422.8 C241.7 425.9 253.5 437.1 260.3 441.4 C267.1 445.7 275.8 447.6 278.9 448.8 M230.6 497.2 C233.0 492.8 239.2 477.4 245.4 471.2 C251.6 465.0 259.1 463.7 267.7 460.0 C276.4 456.3 286.3 454.4 297.5 448.8 C308.6 443.3 328.5 430.2 334.7 426.5 M282.6 463.7 C286.3 461.9 295.2 456.3 304.9 452.6 C314.7 448.8 335.0 443.3 341.0 441.4 M282.6 463.7 C282.6 467.4 280.1 481.1 282.6 486.0 C285.1 491.0 290.7 494.1 297.5 493.5 C304.3 492.8 316.3 486.0 323.5 482.3 C330.8 478.6 338.1 473.0 341.0 471.2 M293.8 523.2 C296.9 520.7 304.5 512.7 312.4 508.3 C320.2 504.0 336.2 499.0 341.0 497.2 M293.8 523.2 C295.6 525.1 300.6 533.7 304.9 534.4 C309.3 535.0 317.3 528.2 319.8 526.9 M26.0 486.0 C31.0 486.6 50.2 486.6 55.8 489.7 C61.4 492.8 62.6 500.9 59.5 504.6 C56.4 508.3 42.8 511.4 37.2 512.1 C31.6 512.7 27.9 509.0 26.0 508.3 M29.7 512.1 C34.7 510.8 47.1 504.6 59.5 504.6 C71.9 504.6 89.2 508.3 104.1 512.1 C119.0 515.8 137.0 525.1 148.7 526.9 C160.5 528.8 170.4 523.8 174.8 523.2 M0.0 534.4 C3.7 531.9 16.1 522.6 22.3 519.5 C28.5 516.4 34.7 516.4 37.2 515.8 M29.7 519.5 C34.1 518.9 47.1 515.8 55.8 515.8 C64.5 515.8 75.6 517.0 81.8 519.5 C88.0 522.0 91.1 528.8 93.0 530.7 M145.0 538.1 C148.7 536.2 161.8 529.4 167.3 526.9 C172.9 524.5 176.6 523.8 178.5 523.2 M148.7 545.5 C153.1 546.1 168.6 547.4 174.8 549.2 C181.0 551.1 184.1 555.4 185.9 556.7 M159.9 564.1 C158.0 567.2 150.6 576.5 148.7 582.7 C146.9 588.9 148.7 598.2 148.7 601.3 M152.5 564.1 L185.9 556.7 M22.3 601.3 C27.3 601.3 45.9 600.1 52.1 601.3 C58.3 602.5 58.3 605.0 59.5 608.7 C60.7 612.5 63.2 621.1 59.5 623.6 C55.8 626.1 44.0 624.9 37.2 623.6 C30.4 622.4 21.7 617.4 18.6 616.2 M63.2 601.3 C68.8 603.8 86.8 613.1 96.7 616.2 C106.6 619.3 114.0 620.5 122.7 619.9 C131.4 619.3 140.7 615.6 148.7 612.5 C156.8 609.4 167.3 603.2 171.1 601.3 M156.2 638.5 C159.3 636.0 166.7 626.7 174.8 623.6 C182.8 620.5 198.3 618.0 204.5 619.9 C210.7 621.8 213.2 630.4 212.0 634.8 C210.7 639.1 203.9 644.1 197.1 645.9 C190.3 647.8 177.9 647.2 171.1 645.9 C164.2 644.7 158.7 639.7 156.2 638.5 M11.2 645.9 C14.3 647.2 24.2 650.3 29.7 653.4 C35.3 656.5 38.4 660.8 44.6 664.5 C50.8 668.2 63.2 673.8 66.9 675.7 M167.3 486.0 C171.7 484.8 185.3 479.2 193.4 478.6 C201.4 478.0 210.7 480.4 215.7 482.3 C220.6 484.2 221.9 488.5 223.1 489.7 M111.6 567.8 C113.4 569.7 120.2 573.4 122.7 579.0 C125.2 584.6 125.8 597.6 126.4 601.3 M341.0 426.5 C344.7 425.3 354.0 421.0 363.3 419.1 C372.6 417.2 386.2 413.5 396.8 415.4 C407.3 417.2 417.9 425.3 426.5 430.2 C435.2 435.2 440.8 441.4 448.8 445.1 C456.9 448.8 465.6 450.1 474.9 452.6 C484.2 455.0 497.8 455.0 504.6 460.0 C511.4 465.0 512.1 474.3 515.8 482.3 C519.5 490.4 524.5 500.3 526.9 508.3 C529.4 516.4 530.0 526.9 530.7 530.7 M504.6 437.7 L512.1 460.0 M530.7 526.9 C530.3 520.7 528.2 502.1 528.8 489.7 C529.4 477.4 531.0 459.7 534.4 452.6 C537.8 445.4 543.0 447.0 549.2 447.0 C555.4 447.0 563.5 449.2 571.6 452.6 C579.6 456.0 590.1 461.9 597.6 467.4 C605.0 473.0 609.4 478.6 616.2 486.0 C623.0 493.5 632.9 504.6 638.5 512.1 C644.1 519.5 645.9 531.9 649.6 530.7 C653.4 529.4 658.9 509.0 660.8 504.6 M538.1 536.2 C543.7 536.5 561.0 535.3 571.6 538.1 C582.1 540.9 591.4 549.2 601.3 553.0 C611.2 556.7 623.0 562.3 631.1 560.4 C639.1 558.5 646.5 544.9 649.6 541.8 M467.4 519.5 C469.9 516.4 477.4 504.6 482.3 500.9 C487.3 497.2 491.6 495.9 497.2 497.2 C502.8 498.4 510.8 503.4 515.8 508.3 C520.7 513.3 525.1 523.8 526.9 526.9 M586.4 526.9 C586.4 520.7 584.6 497.2 586.4 489.7 C588.3 482.3 594.5 479.2 597.6 482.3 C600.7 485.4 601.9 499.7 605.0 508.3 C608.1 517.0 614.3 530.0 616.2 534.4 M627.3 463.7 C629.2 456.9 634.8 432.7 638.5 422.8 C642.2 412.9 647.8 407.3 649.6 404.2 M341.0 478.6 C344.1 476.7 354.6 472.4 359.6 467.4 C364.6 462.5 367.7 455.7 370.7 448.8 C373.8 442.0 376.9 430.2 378.2 426.5 M341.0 504.6 C343.5 504.0 352.2 498.4 355.9 500.9 C359.6 503.4 362.7 512.1 363.3 519.5 C363.9 526.9 359.0 536.8 359.6 545.5 C360.2 554.2 365.8 567.2 367.0 571.6 M374.5 564.1 C375.7 557.9 378.2 535.6 381.9 526.9 C385.6 518.3 394.3 514.5 396.8 512.1 M355.9 370.7 L370.7 341.0 M415.4 370.7 L422.8 341.0 M463.7 367.0 C466.8 363.3 474.9 347.8 482.3 344.7 C489.7 341.6 500.9 346.0 508.3 348.4 C515.8 350.9 523.8 357.7 526.9 359.6 M422.8 348.4 L441.4 370.7" stroke="#6450d8" stroke-width="1.3" opacity="0.85"/></g><path d="M302.4 586.4 H425.0" stroke="#7272ea" stroke-width="1.6" opacity="0.35"/><path d="M303.0 590.9 H427.5" stroke="#7272ea" stroke-width="1.6" opacity="0.35"/><path d="M304.7 594.0 H425.9" stroke="#7272ea" stroke-width="1.6" opacity="0.35"/><path d="M306.0 598.4 H424.2" stroke="#7272ea" stroke-width="1.6" opacity="0.35"/><path d="M301.8 603.3 H422.9" stroke="#7272ea" stroke-width="1.6" opacity="0.35"/><path d="M303.1 606.2 H421.1" stroke="#7272ea" stroke-width="1.6" opacity="0.35"/><path d="M303.9 610.8 H422.6" stroke="#7272ea" stroke-width="1.6" opacity="0.35"/><path d="M304.1 614.1 H423.3" stroke="#7272ea" stroke-width="1.6" opacity="0.35"/><path d="M298.2 618.5 H421.1" stroke="#7272ea" stroke-width="1.6" opacity="0.35"/><path d="M303.8 622.7 H421.0" stroke="#7272ea" stroke-width="1.6" opacity="0.35"/><path d="M305.4 627.1 H424.8" stroke="#7272ea" stroke-width="1.6" opacity="0.35"/><path d="M301.6 631.2 H420.5" stroke="#7272ea" stroke-width="1.6" opacity="0.35"/><path d="M298.8 635.3 H426.9" stroke="#7272ea" stroke-width="1.6" opacity="0.35"/><path d="M305.7 638.3 H424.5" stroke="#7272ea" stroke-width="1.6" opacity="0.35"/><path d="M300.4 642.9 H423.9" stroke="#7272ea" stroke-width="1.6" opacity="0.35"/><path d="M300.8 646.6 H423.3" stroke="#7272ea" stroke-width="1.6" opacity="0.35"/><path d="M305.2 650.9 H422.5" stroke="#7272ea" stroke-width="1.6" opacity="0.35"/><path d="M304.9 655.4 H420.1" stroke="#7272ea" stroke-width="1.6" opacity="0.35"/><path d="M299.3 659.0 H421.1" stroke="#7272ea" stroke-width="1.6" opacity="0.35"/><path d="M305.2 663.4 H423.4" stroke="#7272ea" stroke-width="1.6" opacity="0.35"/><path d="M299.7 667.1 H421.3" stroke="#7272ea" stroke-width="1.6" opacity="0.35"/><path d="M300.3 670.9 H427.5" stroke="#7272ea" stroke-width="1.6" opacity="0.35"/><path d="M479.9 575.3 H649.3" stroke="#7272ea" stroke-width="1.6" opacity="0.35"/><path d="M475.3 579.2 H648.8" stroke="#7272ea" stroke-width="1.6" opacity="0.35"/><path d="M478.2 582.4 H643.0" stroke="#7272ea" stroke-width="1.6" opacity="0.35"/><path d="M476.9 586.1 H649.6" stroke="#7272ea" stroke-width="1.6" opacity="0.35"/><path d="M474.6 591.1 H643.0" stroke="#7272ea" stroke-width="1.6" opacity="0.35"/><path d="M476.0 595.5 H642.0" stroke="#7272ea" stroke-width="1.6" opacity="0.35"/><path d="M472.6 598.5 H645.2" stroke="#7272ea" stroke-width="1.6" opacity="0.35"/><path d="M473.6 602.0 H646.7" stroke="#7272ea" stroke-width="1.6" opacity="0.35"/><path d="M473.2 606.9 H649.7" stroke="#7272ea" stroke-width="1.6" opacity="0.35"/><path d="M474.5 611.3 H642.3" stroke="#7272ea" stroke-width="1.6" opacity="0.35"/><path d="M475.0 615.3 H646.3" stroke="#7272ea" stroke-width="1.6" opacity="0.35"/><path d="M449.2 618.8 H665.2" stroke="#7272ea" stroke-width="1.6" opacity="0.35"/><path d="M449.0 622.8 H662.5" stroke="#7272ea" stroke-width="1.6" opacity="0.35"/><path d="M447.4 626.8 H664.2" stroke="#7272ea" stroke-width="1.6" opacity="0.35"/><path d="M446.4 630.4 H662.2" stroke="#7272ea" stroke-width="1.6" opacity="0.35"/><path d="M448.4 634.8 H669.9" stroke="#7272ea" stroke-width="1.6" opacity="0.35"/><path d="M448.6 638.6 H669.8" stroke="#7272ea" stroke-width="1.6" opacity="0.35"/><path d="M449.1 642.9 H669.5" stroke="#7272ea" stroke-width="1.6" opacity="0.35"/><path d="M447.7 646.9 H664.6" stroke="#7272ea" stroke-width="1.6" opacity="0.35"/><path d="M449.7 650.5 H664.1" stroke="#7272ea" stroke-width="1.6" opacity="0.35"/><path d="M444.5 654.0 H664.6" stroke="#7272ea" stroke-width="1.6" opacity="0.35"/><path d="M446.0 659.4 H666.3" stroke="#7272ea" stroke-width="1.6" opacity="0.35"/><path d="M446.6 662.9 H667.1" stroke="#7272ea" stroke-width="1.6" opacity="0.35"/><path d="M447.0 666.5 H665.2" stroke="#7272ea" stroke-width="1.6" opacity="0.35"/><path d="M447.0 670.5 H663.8" stroke="#7272ea" stroke-width="1.6" opacity="0.35"/><path d="M416.6 376.0 H519.1" stroke="#7272ea" stroke-width="1.6" opacity="0.35"/><path d="M413.8 380.5 H518.6" stroke="#7272ea" stroke-width="1.6" opacity="0.35"/><path d="M413.5 384.4 H521.5" stroke="#7272ea" stroke-width="1.6" opacity="0.35"/><path d="M412.8 389.0 H522.4" stroke="#7272ea" stroke-width="1.6" opacity="0.35"/><path d="M418.7 392.5 H521.5" stroke="#7272ea" stroke-width="1.6" opacity="0.35"/><path d="M413.4 397.3 H522.3" stroke="#7272ea" stroke-width="1.6" opacity="0.35"/><path d="M419.1 401.0 H521.4" stroke="#7272ea" stroke-width="1.6" opacity="0.35"/><path d="M413.0 404.3 H520.8" stroke="#7272ea" stroke-width="1.6" opacity="0.35"/><path d="M418.5 408.3 H518.3" stroke="#7272ea" stroke-width="1.6" opacity="0.35"/><path d="M414.2 412.3 H518.5" stroke="#7272ea" stroke-width="1.6" opacity="0.35"/></svg>
<svg style="left:540px;top:189px" width="683" height="683" viewBox="0 0 683 683"><rect x="0.5" y="0.5" width="682" height="682" fill="none" stroke="#7a7a7a" stroke-width="1"/><path d="M0 0.5 H683 M0 682.5 H683 M0.5 0 V683 M682.5 0 V683" fill="none" stroke="#fff" stroke-width="1" stroke-dasharray="4 4" stroke-dashoffset="-4"/></svg>
<div style="left:1574px;top:35px;width:7px;height:882px;background:#3b3b3b;"></div>
<div style="left:1574px;top:35px;width:1px;height:882px;background:#262626;"></div>
<div style="left:1580px;top:35px;width:1px;height:882px;background:#262626;"></div>
<svg style="left:197px;top:481px" width="10" height="15" viewBox="0 0 10 15"><path d="M2 0.5 L9.5 7 L2 13.5 Z" fill="#e6e6e6"/></svg>
<svg style="left:1066px;top:99px" width="12" height="8" viewBox="0 0 12 8"><path d="M0.5 0.5 H11.5 L6 7.5 Z" fill="#e6e6e6"/></svg>
<svg style="left:181px;top:515px" width="3" height="3" viewBox="0 0 3 3"><circle cx="1.5" cy="1.5" r="1.45" fill="#b0b0b0"/></svg>
<svg style="left:1576px;top:515px" width="3" height="3" viewBox="0 0 3 3"><circle cx="1.5" cy="1.5" r="1.45" fill="#b0b0b0"/></svg>
<svg style="left:181px;top:520px" width="3" height="3" viewBox="0 0 3 3"><circle cx="1.5" cy="1.5" r="1.45" fill="#b0b0b0"/></svg>
<svg style="left:1576px;top:520px" width="3" height="3" viewBox="0 0 3 3"><circle cx="1.5" cy="1.5" r="1.45" fill="#b0b0b0"/></svg>
<svg style="left:181px;top:525px" width="3" height="3" viewBox="0 0 3 3"><circle cx="1.5" cy="1.5" r="1.45" fill="#b0b0b0"/></svg>
<svg style="left:1576px;top:525px" width="3" height="3" viewBox="0 0 3 3"><circle cx="1.5" cy="1.5" r="1.45" fill="#b0b0b0"/></svg>
<div style="left:1581px;top:35px;width:337px;height:882px;background:#3b3b3b;"></div>
<div style="left:1581px;top:35px;width:337px;height:33px;background:#3b3b3b;"></div>
<div style="left:1587px;top:35px;width:34px;height:33px;background:#3c3c3c;border-left:1px solid #282828;border-right:1px solid #282828"></div>
<div style="left:1625px;top:35px;width:34px;height:33px;background:#3c3c3c;border-left:1px solid #282828;border-right:1px solid #282828"></div>
<div style="left:1663px;top:35px;width:34px;height:33px;background:#3c3c3c;border-left:1px solid #282828;border-right:1px solid #282828"></div>
<div style="left:1701px;top:35px;width:34px;height:33px;background:#3c3c3c;border-left:1px solid #282828;border-right:1px solid #282828"></div>
<div style="left:1739px;top:35px;width:34px;height:33px;background:#3c3c3c;border-left:1px solid #282828;border-right:1px solid #282828"></div>
<div style="left:1777px;top:35px;width:34px;height:33px;background:#3c3c3c;border-left:1px solid #282828;border-right:1px solid #282828"></div>
<div style="left:1815px;top:35px;width:34px;height:33px;background:#1f1f1f;"></div>
<div style="left:1816px;top:64px;width:32px;height:4px;background:#4a4a4a;"></div>
<div style="left:1581px;top:68px;width:337px;height:1px;background:#282828;"></div>
<svg style="left:1596px;top:44px" width="16" height="16" viewBox="0 0 16 16"><path fill="#dadada" d="M15.9 0.6 L8.3 11 L6.2 9.4 Z"/><path fill="#dadada" d="M5.6 10.1 L8.4 12.4 C8.8 14.5 7.5 15.6 1.2 15.7 C2.5 14.5 3 11.5 5.6 10.1 Z"/></svg>
<svg style="left:1634px;top:44px" width="16" height="16" viewBox="0 0 16 16"><path fill="#dadada" d="M0.5 0.5 H4 V2 H2 V4 H0.5 Z M12 0.5 H15.5 V4 H14 V2 H12 Z M0.5 12 H2 V14 H4 V15.5 H0.5 Z M15.5 12 V15.5 H12 V14 H14 V12 Z"/><circle cx="8" cy="8" r="2.2" fill="#dadada"/><path fill="#dadada" d="M5.5 1.5 H10.5 C10 3 9 3.5 8 3.5 C7 3.5 6 3 5.5 1.5Z M5.5 14.5 H10.5 C10 13 9 12.5 8 12.5 C7 12.5 6 13 5.5 14.5Z M1.5 5.5 V10.5 C3 10 3.5 9 3.5 8 C3.5 7 3 6 1.5 5.5Z M14.5 5.5 V10.5 C13 10 12.5 9 12.5 8 C12.5 7 13 6 14.5 5.5Z"/></svg>
<svg style="left:1672px;top:44px" width="16" height="16" viewBox="0 0 16 16"><text x="0" y="6.5" font-family="Liberation Sans" font-size="8" font-weight="bold" fill="#dadada">a</text><text x="8" y="10" font-family="Liberation Sans" font-size="10" font-weight="bold" fill="#dadada">b</text><text x="1" y="15.5" font-family="Liberation Sans" font-size="9" font-style="italic" fill="#dadada">c</text></svg>
<svg style="left:1710px;top:44px" width="16" height="16" viewBox="0 0 16 16"><path fill="#dadada" d="M1 1 H12 L15 4.5 L12 8 H1 L4 4.5 Z"/><path fill="#9a9a9a" d="M1 8 H12 L15 11.5 L12 15 H1 L4 11.5 Z"/><path fill="#dadada" d="M1 8 H12 L15 11.5 H4 Z"/></svg>
<svg style="left:1748px;top:44px" width="16" height="16" viewBox="0 0 16 16"><rect x="0" y="0" width="1" height="1" fill="#dadada"/><rect x="0" y="15" width="1" height="1" fill="#dadada"/><rect x="2" y="0" width="1" height="1" fill="#dadada"/><rect x="2" y="15" width="1" height="1" fill="#dadada"/><rect x="4" y="0" width="1" height="1" fill="#dadada"/><rect x="4" y="15" width="1" height="1" fill="#dadada"/><rect x="6" y="0" width="1" height="1" fill="#dadada"/><rect x="6" y="15" width="1" height="1" fill="#dadada"/><rect x="8" y="0" width="1" height="1" fill="#dadada"/><rect x="8" y="15" width="1" height="1" fill="#dadada"/><rect x="10" y="0" width="1" height="1" fill="#dadada"/><rect x="10" y="15" width="1" height="1" fill="#dadada"/><rect x="12" y="0" width="1" height="1" fill="#dadada"/><rect x="12" y="15" width="1" height="1" fill="#dadada"/><rect x="14" y="0" width="1" height="1" fill="#dadada"/><rect x="14" y="15" width="1" height="1" fill="#dadada"/><rect x="0" y="2" width="1" height="1" fill="#dadada"/><rect x="15" y="2" width="1" height="1" fill="#dadada"/><rect x="0" y="4" width="1" height="1" fill="#dadada"/><rect x="15" y="4" width="1" height="1" fill="#dadada"/><rect x="0" y="6" width="1" height="1" fill="#dadada"/><rect x="15" y="6" width="1" height="1" fill="#dadada"/><rect x="0" y="8" width="1" height="1" fill="#dadada"/><rect x="15" y="8" width="1" height="1" fill="#dadada"/><rect x="0" y="10" width="1" height="1" fill="#dadada"/><rect x="15" y="10" width="1" height="1" fill="#dadada"/><rect x="0" y="12" width="1" height="1" fill="#dadada"/><rect x="15" y="12" width="1" height="1" fill="#dadada"/><rect x="0" y="14" width="1" height="1" fill="#dadada"/><rect x="15" y="14" width="1" height="1" fill="#dadada"/><rect x="2" y="2" width="12" height="12" fill="#777"/></svg>
<svg style="left:1786px;top:44px" width="16" height="16" viewBox="0 0 16 16"><path fill="#dadada" d="M15.9 0.6 L8.3 11 L6.2 9.4 Z"/><path fill="#dadada" d="M5.6 10.1 L8.4 12.4 C8.8 14.5 7.5 15.6 1.2 15.7 C2.5 14.5 3 11.5 5.6 10.1 Z"/></svg>
<svg style="left:1824px;top:44px" width="16" height="16" viewBox="0 0 16 16"><rect x="0" y="0" width="2" height="2" fill="#dadada"/><rect x="4" y="0" width="2" height="2" fill="#dadada"/><rect x="8" y="0" width="2" height="2" fill="#dadada"/><rect x="12" y="0" width="2" height="2" fill="#dadada"/><rect x="2" y="2" width="2" height="2" fill="#dadada"/><rect x="6" y="2" width="2" height="2" fill="#dadada"/><rect x="10" y="2" width="2" height="2" fill="#dadada"/><rect x="14" y="2" width="2" height="2" fill="#dadada"/><rect x="0" y="4" width="2" height="2" fill="#dadada"/><rect x="4" y="4" width="2" height="2" fill="#dadada"/><rect x="8" y="4" width="2" height="2" fill="#dadada"/><rect x="12" y="4" width="2" height="2" fill="#dadada"/><rect x="0" y="6" width="16" height="10" fill="#dadada"/><rect x="3" y="7" width="2" height="2" fill="#1f1f1f"/><rect x="7" y="7" width="2" height="2" fill="#1f1f1f"/><rect x="11" y="7" width="2" height="2" fill="#1f1f1f"/><rect x="15" y="7" width="2" height="2" fill="#1f1f1f"/><rect x="1" y="11" width="2" height="2" fill="#1f1f1f"/><rect x="5" y="11" width="2" height="2" fill="#1f1f1f"/><rect x="9" y="11" width="2" height="2" fill="#1f1f1f"/><rect x="13" y="11" width="2" height="2" fill="#1f1f1f"/></svg>
<svg style="left:1902px;top:46px" width="12" height="11" viewBox="0 0 12 11"><rect x="0.5" y="0.5" width="11" height="10" fill="none" stroke="#dadada" stroke-width="1"/><path d="M9 2.5 V8.5 L3 5.5 Z" fill="#dadada"/></svg>
<div style="left:1583px;top:71px;width:334px;height:27px;background:#262626;border-radius:5px"></div>
<span class="t" style="left:1593px;top:77px;font-size:14.5px">FG to Transparent</span>
<svg style="left:1583px;top:100px" width="335" height="152" viewBox="0 0 335 152"><defs><pattern id="ck" x="0" y="0" width="8" height="8" patternUnits="userSpaceOnUse"><rect width="8" height="8" fill="#666"/><rect width="4" height="4" fill="#999"/><rect x="4" y="4" width="4" height="4" fill="#999"/></pattern><linearGradient id="fg" x1="0" x2="1" y1="0" y2="0"><stop offset="0" stop-color="#000" stop-opacity="1"/><stop offset="1" stop-color="#000" stop-opacity="0"/></linearGradient></defs><rect width="335" height="152" fill="url(#ck)"/><rect width="335" height="152" fill="url(#fg)"/></svg>
<div style="left:1583px;top:252px;width:335px;height:15px;background:#393939;"></div>
<svg style="left:1583px;top:252px" width="335" height="15" viewBox="0 0 335 15"><path d="M166.8 0 H332 L327 14.5 H166.8 Z" fill="#313131"/><path d="M0 0 L7.6 14.5 H0 Z" fill="#e6e6e6"/><path d="M335 0 L327 14.5 H335 Z" fill="#e6e6e6"/><path d="M166.8 0.5 L174 14 H159.5 Z" fill="#8c8c8c" stroke="#e0e0e0" stroke-width="0.8"/></svg>
<div style="left:1583px;top:267px;width:335px;height:12px;background:#1c1c1c;border-radius:6px"></div>
<div style="left:1584px;top:268px;width:333px;height:9px;background:#909090;border-radius:5px"></div>
<svg style="left:1583px;top:280px" width="17" height="85" viewBox="0 0 17 85"><defs><pattern id="ck2" x="0" y="0" width="8" height="8" patternUnits="userSpaceOnUse"><rect width="8" height="8" fill="#666"/><rect width="4" height="4" fill="#999"/><rect x="4" y="4" width="4" height="4" fill="#999"/></pattern></defs><path d="M0 0 H16 V6 L0 82 Z" fill="#000"/><path d="M16 6 L0 82 V85 H16 Z" fill="url(#ck2)"/></svg>
<svg style="left:1632px;top:373px" width="12" height="12" viewBox="0 0 12 12"><rect width="12" height="12" rx="1.5" fill="#dadada"/><rect x="3" y="5.2" width="6" height="1.8" fill="#333"/></svg>
<svg style="left:1745px;top:373px" width="12" height="12" viewBox="0 0 12 12"><rect width="12" height="12" rx="1.5" fill="#dadada"/><rect x="3" y="5.2" width="6" height="1.8" fill="#333"/><rect x="5.1" y="3" width="1.8" height="6" fill="#333"/></svg>
<svg style="left:1857px;top:373px" width="12" height="12" viewBox="0 0 12 12"><rect width="12" height="12" rx="1.5" fill="#dadada"/><path d="M2 2 H5 L4.2 2.8 L5.4 4 L4 5.4 L2.8 4.2 L2 5 Z M10 2 V5 L9.2 4.2 L8 5.4 L6.6 4 L7.8 2.8 L7 2 Z M2 10 V7 L2.8 7.8 L4 6.6 L5.4 8 L4.2 9.2 L5 10 Z M10 10 H7 L7.8 9.2 L6.6 8 L8 6.6 L9.2 7.8 L10 7 Z" fill="#333"/></svg>
<div style="left:1581px;top:394px;width:337px;height:1px;background:#262626;"></div>
<svg style="left:1745px;top:396px" width="3" height="3" viewBox="0 0 3 3"><circle cx="1.5" cy="1.5" r="1.3" fill="#9a9a9a"/></svg>
<svg style="left:1750px;top:396px" width="3" height="3" viewBox="0 0 3 3"><circle cx="1.5" cy="1.5" r="1.3" fill="#9a9a9a"/></svg>
<svg style="left:1755px;top:396px" width="3" height="3" viewBox="0 0 3 3"><circle cx="1.5" cy="1.5" r="1.3" fill="#9a9a9a"/></svg>
<div style="left:1587px;top:401px;width:34px;height:33px;background:#3c3c3c;border:1px solid #282828;border-bottom:none"></div>
<div style="left:1625px;top:401px;width:34px;height:33px;background:#1f1f1f;"></div>
<div style="left:1626px;top:430px;width:32px;height:4px;background:#4a4a4a;"></div>
<div style="left:1663px;top:401px;width:34px;height:33px;background:#3c3c3c;border:1px solid #282828;border-bottom:none"></div>
<svg style="left:1596px;top:410px" width="16" height="16" viewBox="0 0 16 16"><path fill="#dadada" d="M3 0.5 H15 L13 4.5 H1 Z M3 6 H15 L13 10 H1 Z M3 11.5 H15 L13 15.5 H1 Z"/></svg>
<svg style="left:1634px;top:410px" width="16" height="16" viewBox="0 0 16 16"><rect x="0.8" y="0.8" width="14.4" height="14.4" fill="none" stroke="#dadada" stroke-width="1.4"/><rect x="3.5" y="3.5" width="2" height="9" fill="#7a7a7a"/><rect x="7" y="3.5" width="2" height="9" fill="#aaa"/><rect x="10.5" y="3.5" width="2" height="9" fill="#dadada"/></svg>
<svg style="left:1672px;top:411px" width="16" height="14" viewBox="0 0 16 14"><rect x="0" y="2.8" width="4" height="3.2" fill="#dadada"/><rect x="12" y="2.8" width="4" height="3.2" fill="#dadada"/><path d="M4 4.4 H12" stroke="#dadada" stroke-width="1.2"/><path d="M2.4 12.8 C3 5.2 13 5.2 13.6 12.8" fill="none" stroke="#dadada" stroke-width="2"/></svg>
<svg style="left:1902px;top:412px" width="12" height="11" viewBox="0 0 12 11"><rect x="0.5" y="0.5" width="11" height="10" fill="none" stroke="#dadada" stroke-width="1"/><path d="M9 2.5 V8.5 L3 5.5 Z" fill="#dadada"/></svg>
<div style="left:1581px;top:434px;width:337px;height:1px;background:#2e2e2e;"></div>
<div style="left:1583px;top:435px;width:335px;height:482px;background:#242424;"></div>
<div style="left:1583px;top:437px;width:335px;height:36px;background:#3a3a3a;"></div>
<svg style="left:1587px;top:449px" width="16" height="12" viewBox="0 0 16 12"><path d="M0.2 6 Q8 -2.6 15.8 6 Q8 14.6 0.2 6Z" fill="#dadada"/><path d="M2.4 5.8 Q8 0.9 13.6 5.8 Q8 10 2.4 5.8Z" fill="#3a3a3a"/><circle cx="8" cy="5.9" r="2.9" fill="#151515"/><circle cx="6.9" cy="4.8" r="1.05" fill="#dadada"/></svg>
<div style="left:1609px;top:438px;width:34px;height:34px;background:#8a8a8a;border:1px solid #000"></div>
<span class="t" style="left:1649px;top:448px;font-size:14.5px">Red</span>
<div style="left:1583px;top:473px;width:335px;height:36px;background:#3a3a3a;"></div>
<svg style="left:1587px;top:485px" width="16" height="12" viewBox="0 0 16 12"><path d="M0.2 6 Q8 -2.6 15.8 6 Q8 14.6 0.2 6Z" fill="#dadada"/><path d="M2.4 5.8 Q8 0.9 13.6 5.8 Q8 10 2.4 5.8Z" fill="#3a3a3a"/><circle cx="8" cy="5.9" r="2.9" fill="#151515"/><circle cx="6.9" cy="4.8" r="1.05" fill="#dadada"/></svg>
<div style="left:1609px;top:474px;width:34px;height:34px;background:#8a8a8a;border:1px solid #000"></div>
<span class="t" style="left:1649px;top:484px;font-size:14.5px">Green</span>
<div style="left:1583px;top:509px;width:335px;height:36px;background:#242424;"></div>
<svg style="left:1587px;top:521px" width="16" height="12" viewBox="0 0 16 12"><path d="M0.2 6 Q8 -2.6 15.8 6 Q8 14.6 0.2 6Z" fill="#dadada"/><path d="M2.4 5.8 Q8 0.9 13.6 5.8 Q8 10 2.4 5.8Z" fill="#242424"/><circle cx="8" cy="5.9" r="2.9" fill="#151515"/><circle cx="6.9" cy="4.8" r="1.05" fill="#dadada"/></svg>
<div style="left:1609px;top:510px;width:34px;height:34px;background:#fff;border:1px solid #000"></div>
<span class="t" style="left:1649px;top:520px;font-size:14.5px">Blue</span>
<div style="left:1583px;top:545px;width:335px;height:36px;background:#3a3a3a;"></div>
<svg style="left:1587px;top:557px" width="16" height="12" viewBox="0 0 16 12"><path d="M0.2 6 Q8 -2.6 15.8 6 Q8 14.6 0.2 6Z" fill="#dadada"/><path d="M2.4 5.8 Q8 0.9 13.6 5.8 Q8 10 2.4 5.8Z" fill="#3a3a3a"/><circle cx="8" cy="5.9" r="2.9" fill="#151515"/><circle cx="6.9" cy="4.8" r="1.05" fill="#dadada"/></svg>
<div style="left:1609px;top:546px;width:34px;height:34px;background:#fff;border:1px solid #000"></div>
<span class="t" style="left:1649px;top:556px;font-size:14.5px">Alpha</span>
<div style="left:1583px;top:581px;width:335px;height:3px;background:#303030;"></div>
<div style="left:1584px;top:584px;width:334px;height:38px;background:#3c3c3c;border:1px solid #333"></div>
<div style="left:1613px;top:584px;width:2px;height:38px;background:#333;"></div>
<div style="left:1643px;top:584px;width:2px;height:38px;background:#333;"></div>
<svg style="left:1591px;top:597px" width="16" height="12" viewBox="0 0 16 12"><path d="M0.2 6 Q8 -2.6 15.8 6 Q8 14.6 0.2 6Z" fill="#dadada"/><path d="M2.4 5.8 Q8 0.9 13.6 5.8 Q8 10 2.4 5.8Z" fill="#3c3c3c"/><circle cx="8" cy="5.9" r="2.9" fill="#151515"/><circle cx="6.9" cy="4.8" r="1.05" fill="#dadada"/></svg>
<svg style="left:1623px;top:596px" width="13" height="14" viewBox="0 0 13 14"><path d="M3 6 V4.5 C3 1.5 10 1.5 10 4.5 V6" fill="none" stroke="#dadada" stroke-width="2"/><rect x="0.5" y="6" width="12" height="7.5" fill="#dadada"/></svg>
<svg style="left:1591px;top:634px" width="16" height="12" viewBox="0 0 16 12"><path d="M0.2 6 Q8 -2.6 15.8 6 Q8 14.6 0.2 6Z" fill="#dadada"/><path d="M2.4 5.8 Q8 0.9 13.6 5.8 Q8 10 2.4 5.8Z" fill="#242424"/><circle cx="8" cy="5.9" r="2.9" fill="#151515"/><circle cx="6.9" cy="4.8" r="1.05" fill="#dadada"/></svg>
<div style="left:1646px;top:623px;width:34px;height:34px;background:#888;border:1px solid #000"></div>
<span class="t" style="left:1682px;top:633px;font-size:14.5px">Channel</span>
</body></html>
